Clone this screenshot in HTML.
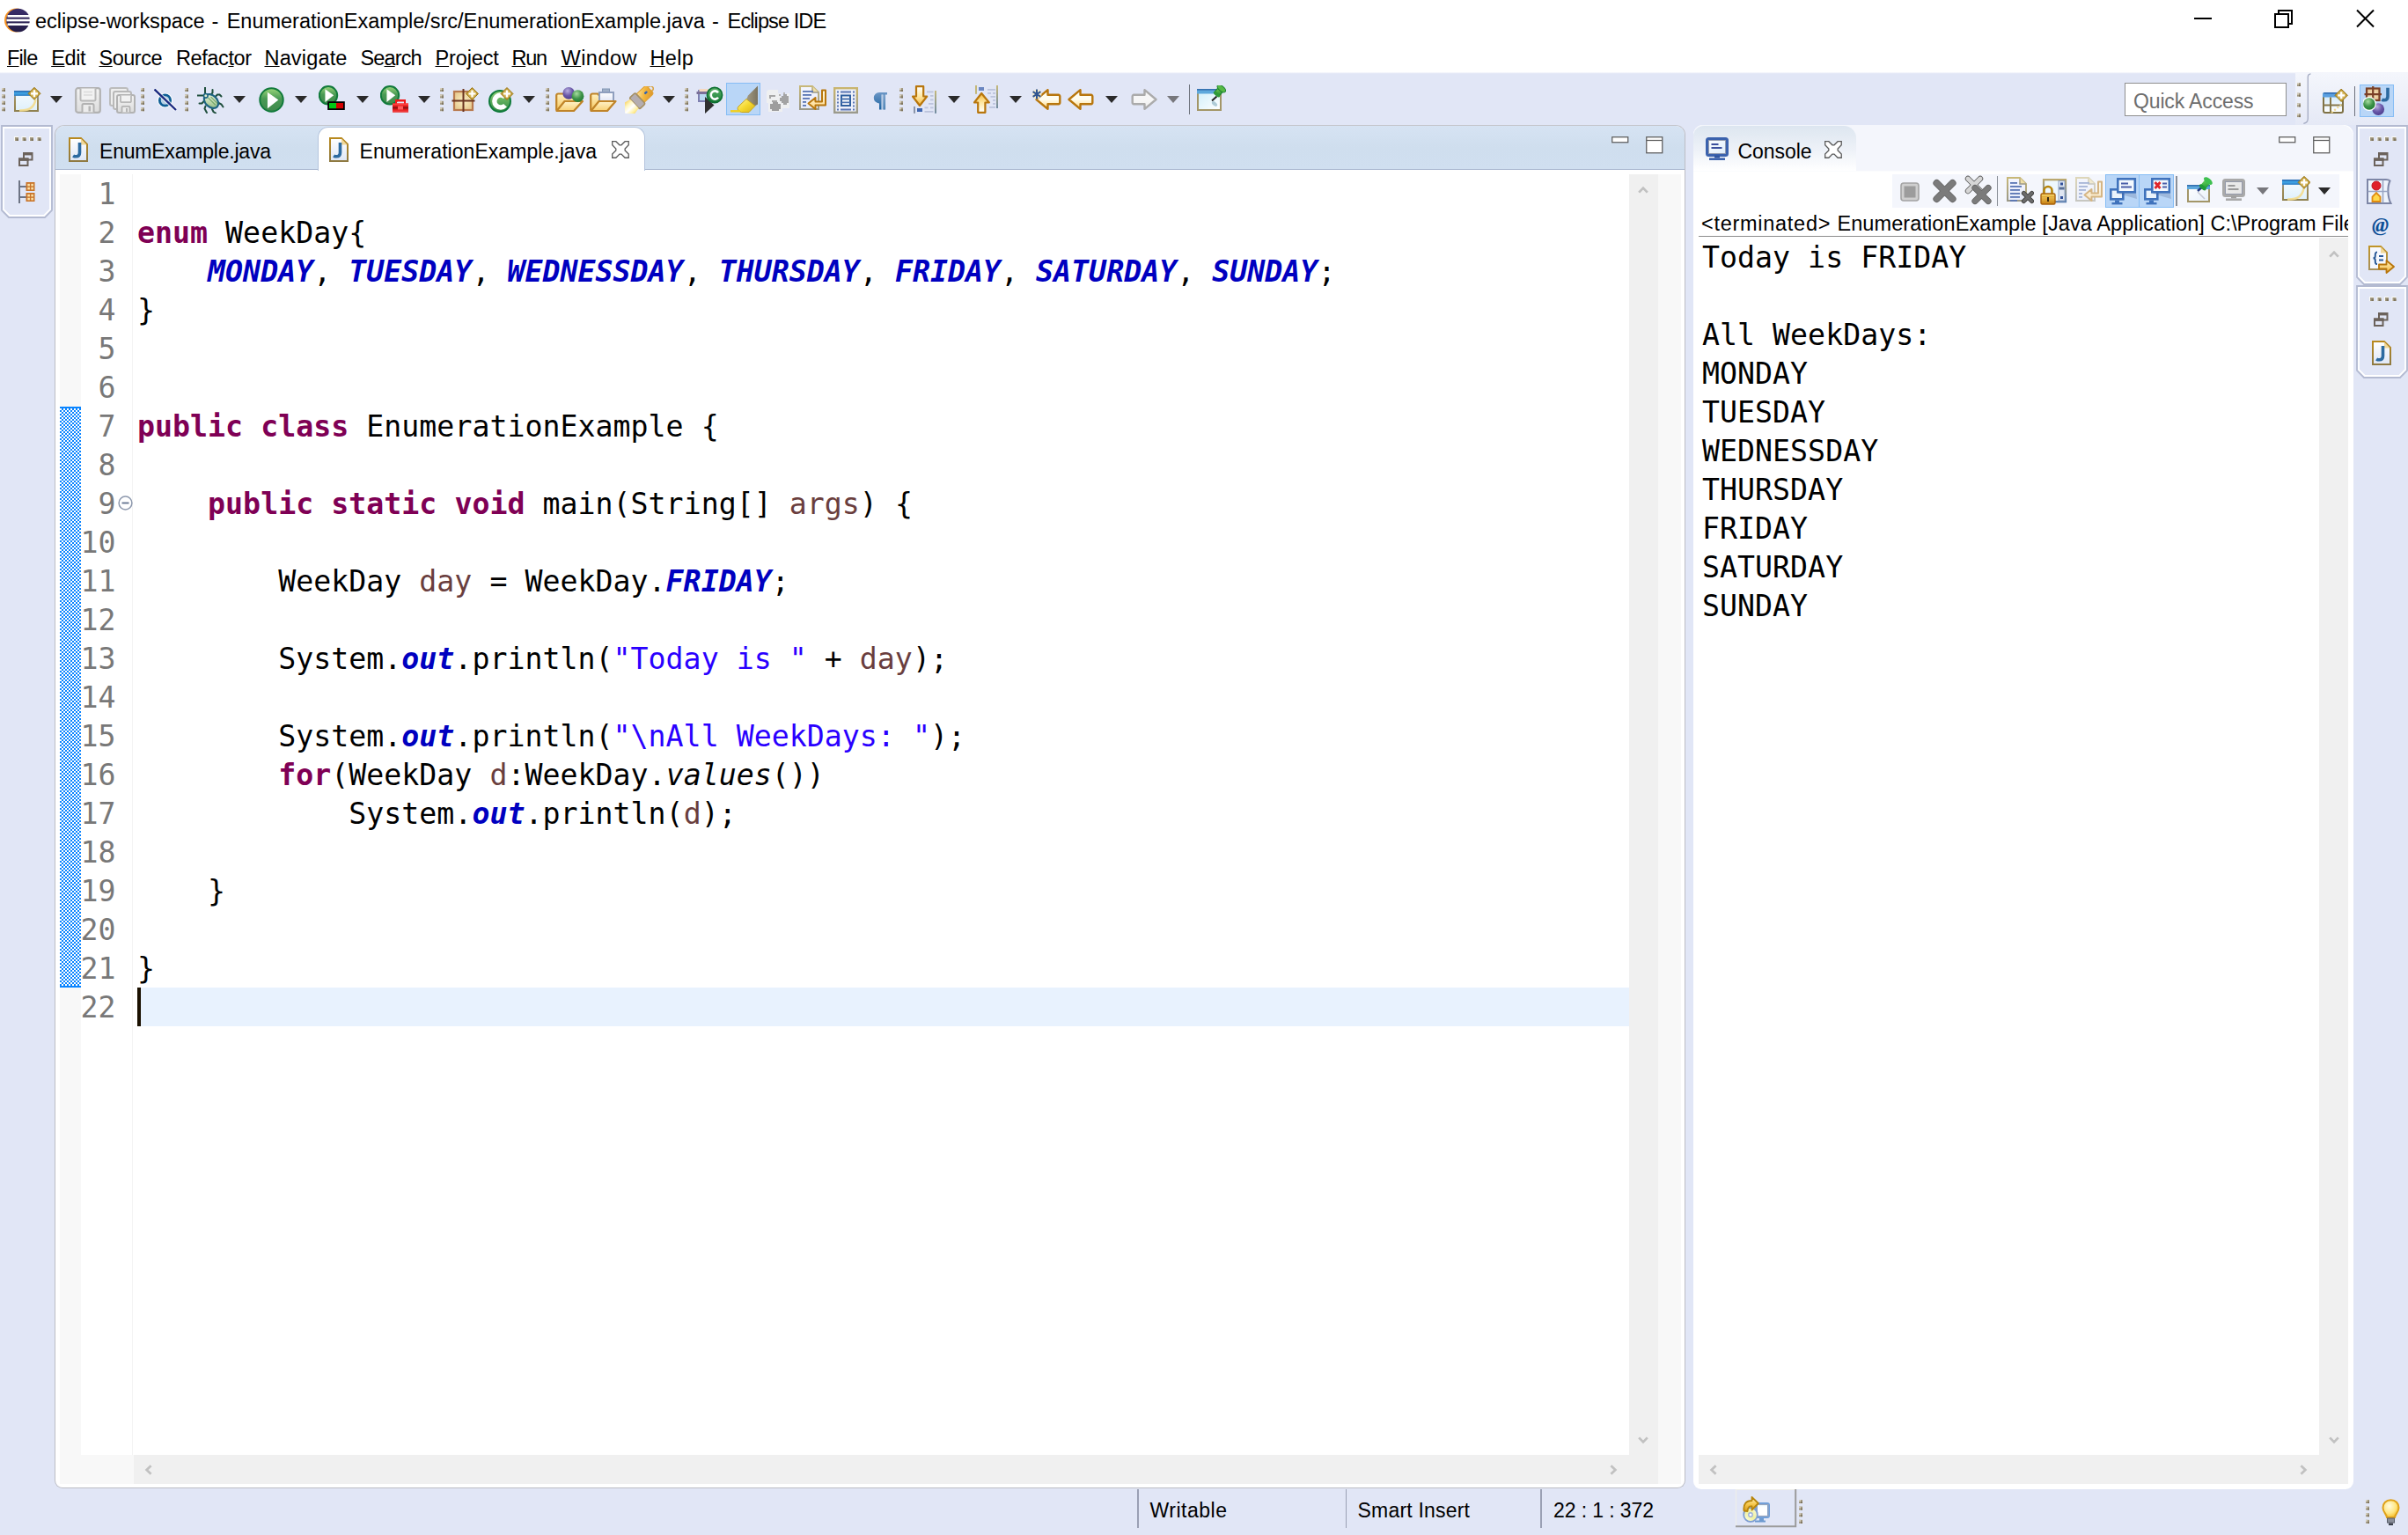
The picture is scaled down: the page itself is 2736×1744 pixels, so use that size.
<!DOCTYPE html>
<html><head><meta charset="utf-8"><title>Eclipse IDE</title>
<style>html,body{margin:0;padding:0}body{width:2736px;height:1744px;overflow:hidden;position:relative;background:#e1e6f6;font-family:'Liberation Sans', sans-serif}u{text-decoration-thickness:inherit}</style></head>
<body>
<div style="position:absolute;left:0px;top:0px;width:2736px;height:83px;background:#fff"></div>
<div style="position:absolute;left:0px;top:82px;width:2736px;height:2px;background:linear-gradient(#fff,#e9ecf8 50%,#e1e6f6)"></div>
<svg style="position:absolute;left:5px;top:9px;" width="30" height="28" viewBox="0 0 30 28"><defs><linearGradient id="g1" x1="0" y1="0" x2="0" y2="1"><stop offset="0" stop-color="#3a2f6b"/><stop offset="1" stop-color="#221a45"/></linearGradient></defs><circle cx="13.5" cy="14" r="13.5" fill="#f79422"/><circle cx="15.5" cy="14" r="13.3" fill="url(#g1)"/><rect x="3.5" y="8" width="25.5" height="2.6" fill="#fff"/><rect x="2.5" y="12.7" width="26.8" height="2.6" fill="#fff"/><rect x="3.5" y="17.4" width="25.5" height="2.6" fill="#fff"/></svg>
<div style="position:absolute;left:40px;top:12.50px;white-space:pre;font:23.5px/1 'Liberation Sans', sans-serif;color:#000"><span style="letter-spacing:-0.042px">eclipse-workspace</span><span style="letter-spacing:1.403px"> - </span><span style="letter-spacing:-0.008px">EnumerationExample/src/EnumerationExample.java</span><span style="letter-spacing:1.670px"> - </span><span style="letter-spacing:-0.897px">Eclipse IDE</span></div>
<div style="position:absolute;left:8px;top:54.70px;white-space:pre;font:normal normal 23.5px/1 'Liberation Sans', sans-serif;letter-spacing:-0.892px;color:#000;text-decoration-thickness:1.3px;text-underline-offset:1.4px;"><u>F</u>ile</div>
<div style="position:absolute;left:58.2px;top:54.70px;white-space:pre;font:normal normal 23.5px/1 'Liberation Sans', sans-serif;letter-spacing:-0.367px;color:#000;text-decoration-thickness:1.3px;text-underline-offset:1.4px;"><u>E</u>dit</div>
<div style="position:absolute;left:112.5px;top:54.70px;white-space:pre;font:normal normal 23.5px/1 'Liberation Sans', sans-serif;letter-spacing:-0.494px;color:#000;text-decoration-thickness:1.3px;text-underline-offset:1.4px;"><u>S</u>ource</div>
<div style="position:absolute;left:200px;top:54.70px;white-space:pre;font:normal normal 23.5px/1 'Liberation Sans', sans-serif;letter-spacing:-0.404px;color:#000;text-decoration-thickness:1.3px;text-underline-offset:1.4px;">Refac<u>t</u>or</div>
<div style="position:absolute;left:300.5px;top:54.70px;white-space:pre;font:normal normal 23.5px/1 'Liberation Sans', sans-serif;letter-spacing:0.164px;color:#000;text-decoration-thickness:1.3px;text-underline-offset:1.4px;"><u>N</u>avigate</div>
<div style="position:absolute;left:409.5px;top:54.70px;white-space:pre;font:normal normal 23.5px/1 'Liberation Sans', sans-serif;letter-spacing:-0.874px;color:#000;text-decoration-thickness:1.3px;text-underline-offset:1.4px;">Se<u>a</u>rch</div>
<div style="position:absolute;left:494.5px;top:54.70px;white-space:pre;font:normal normal 23.5px/1 'Liberation Sans', sans-serif;letter-spacing:-0.140px;color:#000;text-decoration-thickness:1.3px;text-underline-offset:1.4px;"><u>P</u>roject</div>
<div style="position:absolute;left:581.5px;top:54.70px;white-space:pre;font:normal normal 23.5px/1 'Liberation Sans', sans-serif;letter-spacing:-1.312px;color:#000;text-decoration-thickness:1.3px;text-underline-offset:1.4px;"><u>R</u>un</div>
<div style="position:absolute;left:637.5px;top:54.70px;white-space:pre;font:normal normal 23.5px/1 'Liberation Sans', sans-serif;letter-spacing:0.481px;color:#000;text-decoration-thickness:1.3px;text-underline-offset:1.4px;"><u>W</u>indow</div>
<div style="position:absolute;left:738.5px;top:54.70px;white-space:pre;font:normal normal 23.5px/1 'Liberation Sans', sans-serif;letter-spacing:0.319px;color:#000;text-decoration-thickness:1.3px;text-underline-offset:1.4px;"><u>H</u>elp</div>
<svg style="position:absolute;left:2480px;top:0px;" width="256" height="44" viewBox="0 0 256 44"><g fill="none" stroke="#000" stroke-width="2"><path d="M13 21h20"/><path d="M105 16h15v15h-15z"/><path d="M109 16v-4h15v15h-4"/><path d="M198 11.5l19 19M217 11.5l-19 19"/></g></svg>
<svg style="position:absolute;left:2px;top:100px;" width="4" height="27" viewBox="0 0 4 27"><rect x="0" y="0.0" width="4" height="4" fill="#a39a84"/><rect x="0" y="0.0" width="2" height="2" fill="#d6cfbc"/><rect x="2" y="2.0" width="2" height="2" fill="#7f755d"/><rect x="0" y="7.4" width="4" height="4" fill="#a39a84"/><rect x="0" y="7.4" width="2" height="2" fill="#d6cfbc"/><rect x="2" y="9.4" width="2" height="2" fill="#7f755d"/><rect x="0" y="14.8" width="4" height="4" fill="#a39a84"/><rect x="0" y="14.8" width="2" height="2" fill="#d6cfbc"/><rect x="2" y="16.8" width="2" height="2" fill="#7f755d"/><rect x="0" y="22.2" width="4" height="4" fill="#a39a84"/><rect x="0" y="22.2" width="2" height="2" fill="#d6cfbc"/><rect x="2" y="24.2" width="2" height="2" fill="#7f755d"/></svg>
<svg style="position:absolute;left:16px;top:98px;" width="32" height="32" viewBox="0 0 32 32"><defs><linearGradient id="g2" x1="0" y1="0" x2="0" y2="1"><stop offset="0" stop-color="#8aa0c8"/><stop offset="0.5" stop-color="#9e8c55"/><stop offset="1" stop-color="#8f8150"/></linearGradient><linearGradient id="g3" x1="0" y1="0" x2="0" y2="1"><stop offset="0" stop-color="#f5fbfe"/><stop offset="1" stop-color="#dff0fb"/></linearGradient></defs><rect x="1" y="6" width="26" height="22" fill="url(#g3)" stroke="url(#g2)" stroke-width="2"/><rect x="0" y="5" width="28" height="5.5" fill="#3c9fe0"/><rect x="0" y="5" width="28" height="1.6" fill="#2b6fb5"/><rect x="0" y="9.5" width="28" height="1.3" fill="#2f7fc4"/><path d="M6 27.5C16 28 23 24 24.5 15" fill="none" stroke="#f3dc8c" stroke-width="2.4" opacity="0.9"/><defs><radialGradient id="g4" cx="0.5" cy="0.5" r="0.6"><stop offset="0" stop-color="#f3e2a4"/><stop offset="0.55" stop-color="#c9a440"/><stop offset="1" stop-color="#a07a14"/></radialGradient></defs><path d="M23 1.3000000000000007L30 8.3L23 15.3L16 8.3z" fill="url(#g4)" stroke="#9c7a1c" stroke-width="1"/><path d="M23 4.300000000000001v8M19 8.3h8" stroke="#fff" stroke-width="2.200"/></svg>
<svg style="position:absolute;left:57px;top:109px;" width="14" height="8" viewBox="0 0 14 8"><path d="M0 0h14l-7 8z" fill="#2a2a2a"/></svg>
<svg style="position:absolute;left:85px;top:99px;" width="30" height="30" viewBox="0 0 30 30"><defs><linearGradient id="g5" x1="0" y1="0" x2="0" y2="1"><stop offset="0" stop-color="#f4f4f4"/><stop offset="1" stop-color="#dcdcdc"/></linearGradient></defs><rect x="1.2" y="1.2" width="27.6" height="27.6" rx="2.5" fill="url(#g5)" stroke="#b2b2b2" stroke-width="2.2"/><path d="M6.5 1.5v12.5a1.5 1.5 0 0 0 1.5 1.5h14a1.5 1.5 0 0 0 1.5-1.5V1.5" fill="#f2f2f2" stroke="#b8b8b8" stroke-width="2"/><path d="M10 5.5h10M10 9h10" stroke="#dadada" stroke-width="1.6"/><path d="M8.5 28.5v-8a1.5 1.5 0 0 1 1.5-1.5h10a1.5 1.5 0 0 1 1.5 1.5v8" fill="#ececec" stroke="#b2b2b2" stroke-width="2"/><rect x="15.5" y="21.5" width="2.6" height="6" fill="#b5b5b5"/></svg>
<svg style="position:absolute;left:124px;top:99px;" width="30" height="30" viewBox="0 0 30 30"><defs><linearGradient id="g6" x1="0" y1="0" x2="0" y2="1"><stop offset="0" stop-color="#f4f4f4"/><stop offset="1" stop-color="#dcdcdc"/></linearGradient></defs><rect x="1" y="1" width="20" height="20" rx="2.2" fill="#eee" stroke="#bcbcbc" stroke-width="2"/><rect x="5" y="5" width="20" height="20" rx="2.2" fill="#eee" stroke="#b8b8b8" stroke-width="2"/><rect x="9" y="9" width="20" height="20" rx="2.2" fill="url(#g6)" stroke="#b2b2b2" stroke-width="2"/><path d="M13 9.5v6.5a1.2 1.2 0 0 0 1.2 1.2h9.6a1.2 1.2 0 0 0 1.2-1.2V9.5" fill="#f2f2f2" stroke="#b8b8b8" stroke-width="1.8"/><path d="M14.5 28.5v-5.5a1.2 1.2 0 0 1 1.2-1.2h6.6a1.2 1.2 0 0 1 1.2 1.2v5.5" fill="#ececec" stroke="#b2b2b2" stroke-width="1.8"/><rect x="19" y="24" width="2" height="4.2" fill="#b5b5b5"/></svg>
<svg style="position:absolute;left:160px;top:100px;" width="4" height="27" viewBox="0 0 4 27"><rect x="0" y="0.0" width="4" height="4" fill="#a39a84"/><rect x="0" y="0.0" width="2" height="2" fill="#d6cfbc"/><rect x="2" y="2.0" width="2" height="2" fill="#7f755d"/><rect x="0" y="7.4" width="4" height="4" fill="#a39a84"/><rect x="0" y="7.4" width="2" height="2" fill="#d6cfbc"/><rect x="2" y="9.4" width="2" height="2" fill="#7f755d"/><rect x="0" y="14.8" width="4" height="4" fill="#a39a84"/><rect x="0" y="14.8" width="2" height="2" fill="#d6cfbc"/><rect x="2" y="16.8" width="2" height="2" fill="#7f755d"/><rect x="0" y="22.2" width="4" height="4" fill="#a39a84"/><rect x="0" y="22.2" width="2" height="2" fill="#d6cfbc"/><rect x="2" y="24.2" width="2" height="2" fill="#7f755d"/></svg>
<svg style="position:absolute;left:175px;top:100.5px;" width="26" height="25" viewBox="0 0 26 25"><circle cx="12.5" cy="13" r="8.6" fill="#fff"/><circle cx="12.5" cy="13" r="6.2" fill="#b5d0e4" stroke="#0e5e96" stroke-width="2.8"/><path d="M0.5 0.5L25 24" stroke="#fff" stroke-width="4.5" opacity="0.7"/><path d="M0.5 0.5L25 24" stroke="#1b2a80" stroke-width="2.4"/></svg>
<svg style="position:absolute;left:210px;top:100px;" width="4" height="27" viewBox="0 0 4 27"><rect x="0" y="0.0" width="4" height="4" fill="#a39a84"/><rect x="0" y="0.0" width="2" height="2" fill="#d6cfbc"/><rect x="2" y="2.0" width="2" height="2" fill="#7f755d"/><rect x="0" y="7.4" width="4" height="4" fill="#a39a84"/><rect x="0" y="7.4" width="2" height="2" fill="#d6cfbc"/><rect x="2" y="9.4" width="2" height="2" fill="#7f755d"/><rect x="0" y="14.8" width="4" height="4" fill="#a39a84"/><rect x="0" y="14.8" width="2" height="2" fill="#d6cfbc"/><rect x="2" y="16.8" width="2" height="2" fill="#7f755d"/><rect x="0" y="22.2" width="4" height="4" fill="#a39a84"/><rect x="0" y="22.2" width="2" height="2" fill="#d6cfbc"/><rect x="2" y="24.2" width="2" height="2" fill="#7f755d"/></svg>
<svg style="position:absolute;left:223.5px;top:99px;" width="31" height="30" viewBox="0 0 31 30"><defs><linearGradient id="g7" x1="0" y1="0" x2="1" y2="1"><stop offset="0" stop-color="#f2f8ea"/><stop offset="0.5" stop-color="#c4dcb4"/><stop offset="1" stop-color="#7fae6e"/></linearGradient></defs><g fill="none" stroke="#1f4f3d" stroke-width="2" stroke-linecap="round"><path d="M9 0.5v6.5"/><path d="M17.5 3v3.5l-3 3.5"/><path d="M0.5 9.5h7"/><path d="M20 11.5l3-3h2.5l2 2"/><path d="M2.5 18.5h3l3-3.5"/><path d="M24.5 18l3 1.5 2 3"/><path d="M9.5 21.5l-1 3 2.5 4.5"/><path d="M17 25l1.5 3 2.5 1.5"/></g><ellipse cx="16" cy="16" rx="9.2" ry="6.6" transform="rotate(42 16 16)" fill="url(#g7)" stroke="#1e6482" stroke-width="2.2"/><path d="M12.500 12l8.500 8.500M15.500 11l7.500 7.500" stroke="#5f9858" stroke-width="1.400" opacity="0.700"/><circle cx="9.8" cy="9.8" r="2.3" fill="#dfeccf" stroke="#1e6482" stroke-width="1.6"/></svg>
<svg style="position:absolute;left:265px;top:109px;" width="14" height="8" viewBox="0 0 14 8"><path d="M0 0h14l-7 8z" fill="#2a2a2a"/></svg>
<svg style="position:absolute;left:294px;top:98.5px;" width="29" height="29" viewBox="0 0 29 29"><defs><linearGradient id="g8" x1="0" y1="0" x2="0" y2="1"><stop offset="0" stop-color="#9ad67a"/><stop offset="0.45" stop-color="#4a9a55"/><stop offset="1" stop-color="#3f8a4c"/></linearGradient></defs><circle cx="14.5" cy="14.5" r="13.2" fill="url(#g8)" stroke="#117a3b" stroke-width="2"/><path d="M9.956 5.696L22.310000000000002 14.5L9.956 24.156z" fill="#fff"/></svg>
<svg style="position:absolute;left:335px;top:109px;" width="14" height="8" viewBox="0 0 14 8"><path d="M0 0h14l-7 8z" fill="#2a2a2a"/></svg>
<svg style="position:absolute;left:362px;top:96.7px;" width="31" height="29" viewBox="0 0 31 29"><defs><linearGradient id="g9" x1="0" y1="0" x2="0" y2="1"><stop offset="0" stop-color="#9ad67a"/><stop offset="0.45" stop-color="#4a9a55"/><stop offset="1" stop-color="#3f8a4c"/></linearGradient></defs><circle cx="11" cy="11.3" r="10.2" fill="url(#g9)" stroke="#117a3b" stroke-width="2"/><path d="M7.416 4.356000000000001L17.16 11.3L7.416 18.916z" fill="#fff"/><rect x="10.2" y="18.2" width="19.6" height="9.8" fill="#000"/><rect x="12" y="20" width="8" height="6.2" fill="#00c814"/><rect x="20" y="20" width="8" height="6.2" fill="#d40000"/></svg>
<svg style="position:absolute;left:405px;top:109px;" width="14" height="8" viewBox="0 0 14 8"><path d="M0 0h14l-7 8z" fill="#2a2a2a"/></svg>
<svg style="position:absolute;left:432px;top:96.7px;" width="33" height="31" viewBox="0 0 33 31"><defs><linearGradient id="g10" x1="0" y1="0" x2="0" y2="1"><stop offset="0" stop-color="#9ad67a"/><stop offset="0.45" stop-color="#4a9a55"/><stop offset="1" stop-color="#3f8a4c"/></linearGradient></defs><circle cx="11" cy="11.3" r="10.2" fill="url(#g10)" stroke="#117a3b" stroke-width="2"/><path d="M7.416 4.356000000000001L17.16 11.3L7.416 18.916z" fill="#fff"/><path d="M18 17.5h10v4" fill="none" stroke="#f01818" stroke-width="2"/><rect x="18" y="17" width="10" height="5" fill="none" stroke="#f01818" stroke-width="2"/><rect x="14" y="20.5" width="18" height="10" fill="#e31a1a"/><rect x="14" y="20.5" width="18" height="2" fill="#ff4040"/><rect x="14" y="24.5" width="18" height="2" fill="#8e0f0f"/><rect x="20" y="23.5" width="6" height="4" fill="#ff5a5a"/><rect x="14" y="28.5" width="18" height="2" fill="#f03a3a"/></svg>
<svg style="position:absolute;left:475px;top:109px;" width="14" height="8" viewBox="0 0 14 8"><path d="M0 0h14l-7 8z" fill="#2a2a2a"/></svg>
<svg style="position:absolute;left:500px;top:100px;" width="4" height="27" viewBox="0 0 4 27"><rect x="0" y="0.0" width="4" height="4" fill="#a39a84"/><rect x="0" y="0.0" width="2" height="2" fill="#d6cfbc"/><rect x="2" y="2.0" width="2" height="2" fill="#7f755d"/><rect x="0" y="7.4" width="4" height="4" fill="#a39a84"/><rect x="0" y="7.4" width="2" height="2" fill="#d6cfbc"/><rect x="2" y="9.4" width="2" height="2" fill="#7f755d"/><rect x="0" y="14.8" width="4" height="4" fill="#a39a84"/><rect x="0" y="14.8" width="2" height="2" fill="#d6cfbc"/><rect x="2" y="16.8" width="2" height="2" fill="#7f755d"/><rect x="0" y="22.2" width="4" height="4" fill="#a39a84"/><rect x="0" y="22.2" width="2" height="2" fill="#d6cfbc"/><rect x="2" y="24.2" width="2" height="2" fill="#7f755d"/></svg>
<svg style="position:absolute;left:512.5px;top:98px;" width="32" height="32" viewBox="0 0 32 32"><defs><radialGradient id="g11" cx="0.5" cy="0.5" r="0.7"><stop offset="0" stop-color="#fbf0c4"/><stop offset="1" stop-color="#e2c184"/></radialGradient></defs><rect x="3" y="6" width="21" height="21" fill="url(#g11)" stroke="#b87a4e" stroke-width="2.2"/><path d="M13.5 3v26M0.5 16.5h26" stroke="#6a3420" stroke-width="2"/><defs><radialGradient id="g12" cx="0.5" cy="0.5" r="0.6"><stop offset="0" stop-color="#f3e2a4"/><stop offset="0.55" stop-color="#c9a440"/><stop offset="1" stop-color="#a07a14"/></radialGradient></defs><path d="M23.5 1.5L30.5 8.5L23.5 15.5L16.5 8.5z" fill="url(#g12)" stroke="#9c7a1c" stroke-width="1"/><path d="M23.5 4.5v8M19.5 8.5h8" stroke="#fff" stroke-width="2.200"/></svg>
<svg style="position:absolute;left:555px;top:97.5px;" width="30" height="30" viewBox="0 0 30 30"><defs><linearGradient id="g13" x1="0" y1="0" x2="0" y2="1"><stop offset="0" stop-color="#8fcf74"/><stop offset="1" stop-color="#2f8a44"/></linearGradient></defs><circle cx="13" cy="17" r="12" fill="url(#g13)" stroke="#0f7a3a" stroke-width="2"/><path d="M19 12.300a7 7 0 1 0 0 9.400" fill="none" stroke="#fff" stroke-width="5.400"/><defs><radialGradient id="g14" cx="0.5" cy="0.5" r="0.6"><stop offset="0" stop-color="#f3e2a4"/><stop offset="0.55" stop-color="#c9a440"/><stop offset="1" stop-color="#a07a14"/></radialGradient></defs><path d="M21 1.5L28 8.5L21 15.5L14 8.5z" fill="url(#g14)" stroke="#9c7a1c" stroke-width="1"/><path d="M21 4.5v8M17 8.5h8" stroke="#fff" stroke-width="2.200"/></svg>
<svg style="position:absolute;left:594px;top:109px;" width="14" height="8" viewBox="0 0 14 8"><path d="M0 0h14l-7 8z" fill="#2a2a2a"/></svg>
<svg style="position:absolute;left:620px;top:100px;" width="4" height="27" viewBox="0 0 4 27"><rect x="0" y="0.0" width="4" height="4" fill="#a39a84"/><rect x="0" y="0.0" width="2" height="2" fill="#d6cfbc"/><rect x="2" y="2.0" width="2" height="2" fill="#7f755d"/><rect x="0" y="7.4" width="4" height="4" fill="#a39a84"/><rect x="0" y="7.4" width="2" height="2" fill="#d6cfbc"/><rect x="2" y="9.4" width="2" height="2" fill="#7f755d"/><rect x="0" y="14.8" width="4" height="4" fill="#a39a84"/><rect x="0" y="14.8" width="2" height="2" fill="#d6cfbc"/><rect x="2" y="16.8" width="2" height="2" fill="#7f755d"/><rect x="0" y="22.2" width="4" height="4" fill="#a39a84"/><rect x="0" y="22.2" width="2" height="2" fill="#d6cfbc"/><rect x="2" y="24.2" width="2" height="2" fill="#7f755d"/></svg>
<svg style="position:absolute;left:630.5px;top:98px;" width="33" height="30" viewBox="0 0 33 30"><defs><linearGradient id="g15" x1="0" y1="0" x2="0" y2="1"><stop offset="0" stop-color="#fff0c0"/><stop offset="1" stop-color="#f6c860"/></linearGradient><linearGradient id="g16" x1="0" y1="0" x2="0" y2="1"><stop offset="0" stop-color="#fff3cc"/><stop offset="1" stop-color="#f9d173"/></linearGradient></defs><g transform="translate(0 7)"><path d="M1.2 20.5V3.5a2 2 0 0 1 2-2h6l2 2.5h13v6" fill="url(#g15)" stroke="#c08428" stroke-width="2.2" stroke-linejoin="round"/><path d="M1.5 21L10.5 10h20.5L21 21z" fill="url(#g16)" stroke="#c08428" stroke-width="2.2" stroke-linejoin="round"/></g><defs><radialGradient id="g17" cx="0.4" cy="0.3" r="0.75"><stop offset="0" stop-color="#b9aee0"/><stop offset="0.55" stop-color="#6a58a8"/><stop offset="1" stop-color="#4a3a8c"/></radialGradient></defs><circle cx="15.2" cy="7.9" r="6.8" fill="url(#g17)"/><defs><radialGradient id="g18" cx="0.4" cy="0.3" r="0.75"><stop offset="0" stop-color="#a8dca0"/><stop offset="0.55" stop-color="#3f944a"/><stop offset="1" stop-color="#1f7a33"/></radialGradient></defs><circle cx="25.5" cy="11.2" r="6.9" fill="url(#g18)"/></svg>
<svg style="position:absolute;left:669.5px;top:98px;" width="33" height="30" viewBox="0 0 33 30"><defs><linearGradient id="g19" x1="0" y1="0" x2="0" y2="1"><stop offset="0" stop-color="#fff0c0"/><stop offset="1" stop-color="#f6c860"/></linearGradient></defs><path d="M1.200 27.500V10.500a2 2 0 0 1 2-2h6l2 2.500h13v6" fill="url(#g19)" stroke="#c08428" stroke-width="2.200" stroke-linejoin="round"/><defs><linearGradient id="g20" x1="0" y1="0" x2="0" y2="1"><stop offset="0" stop-color="#ffffff"/><stop offset="1" stop-color="#dfe4f4"/></linearGradient></defs><rect x="14.500" y="3" width="8" height="4.500" fill="#9fb0c8" stroke="#8296b4" stroke-width="1"/><rect x="11" y="7" width="16" height="11" fill="url(#g20)" stroke="#8f9fbe" stroke-width="2"/><defs><linearGradient id="g21" x1="0" y1="0" x2="0" y2="1"><stop offset="0" stop-color="#fff3cc"/><stop offset="1" stop-color="#f9d173"/></linearGradient></defs><path d="M1.500 28L10.500 17h19L20 28z" fill="url(#g21)" stroke="#c08428" stroke-width="2.200" stroke-linejoin="round"/></svg>
<svg style="position:absolute;left:710px;top:98px;overflow:hidden" width="33" height="31" viewBox="0 0 33 31"><defs><linearGradient id="g22" x1="0" y1="0" x2="1" y2="1"><stop offset="0" stop-color="#ffe9a8"/><stop offset="0.5" stop-color="#f2b53c"/><stop offset="1" stop-color="#d9932a"/></linearGradient><linearGradient id="g23" x1="0" y1="0" x2="0" y2="1"><stop offset="0" stop-color="#f9c94a"/><stop offset="0.3" stop-color="#fff6c0"/><stop offset="0.55" stop-color="#ffffff"/><stop offset="0.8" stop-color="#fff0a0"/><stop offset="1" stop-color="#f7cf5a"/></linearGradient></defs><g transform="rotate(-43 16 15)"><circle cx="34" cy="15" r="3" fill="none" stroke="#d9a54a" stroke-width="1.6"/><rect x="16" y="8.5" width="17" height="13" rx="2.5" fill="url(#g22)" stroke="#e0a030" stroke-width="1"/><rect x="25" y="13.5" width="4" height="2.4" rx="1" fill="#2c63b8"/><rect x="9" y="6.5" width="9" height="17" rx="2" fill="#b4adb0" stroke="#a48e62" stroke-width="1.6"/><path d="M9 8L-6 5v20L9 22z" fill="url(#g23)"/></g></svg>
<svg style="position:absolute;left:753px;top:109px;" width="14" height="8" viewBox="0 0 14 8"><path d="M0 0h14l-7 8z" fill="#2a2a2a"/></svg>
<svg style="position:absolute;left:778px;top:100px;" width="4" height="27" viewBox="0 0 4 27"><rect x="0" y="0.0" width="4" height="4" fill="#a39a84"/><rect x="0" y="0.0" width="2" height="2" fill="#d6cfbc"/><rect x="2" y="2.0" width="2" height="2" fill="#7f755d"/><rect x="0" y="7.4" width="4" height="4" fill="#a39a84"/><rect x="0" y="7.4" width="2" height="2" fill="#d6cfbc"/><rect x="2" y="9.4" width="2" height="2" fill="#7f755d"/><rect x="0" y="14.8" width="4" height="4" fill="#a39a84"/><rect x="0" y="14.8" width="2" height="2" fill="#d6cfbc"/><rect x="2" y="16.8" width="2" height="2" fill="#7f755d"/><rect x="0" y="22.2" width="4" height="4" fill="#a39a84"/><rect x="0" y="22.2" width="2" height="2" fill="#d6cfbc"/><rect x="2" y="24.2" width="2" height="2" fill="#7f755d"/></svg>
<svg style="position:absolute;left:791px;top:97px;" width="31" height="33" viewBox="0 0 31 33"><rect x="3" y="6" width="12" height="12" fill="#b9d9f2" stroke="#7e7fb0" stroke-width="2"/><rect x="0.5" y="7" width="14" height="3" fill="#7a6f98"/><rect x="3.5" y="4" width="10" height="3" fill="#f6d9c0"/><path d="M10 13v19l10.5-9.5z" fill="#2f2f2f"/><defs><linearGradient id="g24" x1="0" y1="0" x2="0" y2="1"><stop offset="0" stop-color="#5fb46a"/><stop offset="1" stop-color="#157a35"/></linearGradient></defs><circle cx="21" cy="11" r="8.6" fill="url(#g24)" stroke="#0c6f30" stroke-width="1.6"/><path d="M25 8.2a4.6 4.6 0 1 0 0 5.6" fill="none" stroke="#fff" stroke-width="2.6"/></svg>
<div style="position:absolute;left:825px;top:94px;width:39px;height:37px;background:#b9d6f7;border:1px solid #86bdf5;box-sizing:border-box"></div>
<svg style="position:absolute;left:829.5px;top:96.5px;" width="32" height="32" viewBox="0 0 32 32"><defs><linearGradient id="g25" x1="0" y1="0" x2="1" y2="0"><stop offset="0" stop-color="#a39c84"/><stop offset="1" stop-color="#7b745f"/></linearGradient><linearGradient id="g26" x1="0" y1="0" x2="1" y2="1"><stop offset="0" stop-color="#fff7a8"/><stop offset="0.5" stop-color="#f5d930"/><stop offset="1" stop-color="#d8b318"/></linearGradient></defs><path d="M31 0.5L20 11.5l-2 4.5 9.5 7.5 3.5-2z" fill="url(#g25)"/><path d="M18 15.5L9 24c-1.5 1.8-1 4 0.5 5.2l3 1.3h8.5l7-7.2z" fill="url(#g26)" stroke="#c9a51a" stroke-width="1"/><path d="M0 29.3h11" stroke="#f1cf1c" stroke-width="2.4"/></svg>
<svg style="position:absolute;left:871px;top:100.5px;" width="27" height="27" viewBox="0 0 27 27"><path d="M2 1h11v4h3v4h7v-4h3v17h-8v4h-16v-10h-3v-12z" fill="#f1f1f1" opacity="0.9"/><path d="M3 7h7v2h-5v2h-2z" fill="#a7a7a7"/><path d="M6 13h6v2h-6z" fill="#a7a7a7"/><path d="M4 17h3v-2h6v2h3v6h-2v2h-8v-2h-2z" fill="#9d9d9d"/><path d="M17 8h2v-2h4v2h2v8h-2v2h-4v-2h-2v-2h-2v-4h2z" fill="#a3a3a3"/><rect x="19" y="4" width="2" height="2" fill="#b5b5b5"/><rect x="14" y="6" width="2" height="2" fill="#b5b5b5"/></svg>
<svg style="position:absolute;left:907.5px;top:96.5px;opacity:1" width="32" height="30" viewBox="0 0 32 30"><defs><linearGradient id="g27" x1="0" y1="0" x2="0" y2="1"><stop offset="0" stop-color="#c8b878"/><stop offset="1" stop-color="#9a9888"/></linearGradient><linearGradient id="g28" x1="0" y1="0" x2="0" y2="1"><stop offset="0" stop-color="#f4f6ff"/><stop offset="1" stop-color="#e6ebf8"/></linearGradient></defs><path d="M1 1h14l7 7v19h-21z" fill="url(#g28)" stroke="url(#g27)" stroke-width="2" stroke-linejoin="miter"/><path d="M15 1v7h7" fill="#f0dfa8" stroke="url(#g27)" stroke-width="1.6"/><rect x="4" y="6" width="12" height="1.8" fill="#5a76b4"/><rect x="4" y="10" width="10" height="1.8" fill="#5a76b4"/><rect x="4" y="14" width="8" height="1.8" fill="#5a76b4"/><rect x="4" y="18" width="4" height="1.8" fill="#5a76b4"/><rect x="4" y="22" width="4" height="1.8" fill="#5a76b4"/><defs><linearGradient id="g29" x1="0" y1="0" x2="0" y2="1"><stop offset="0" stop-color="#fffbe6"/><stop offset="1" stop-color="#ffd98a"/></linearGradient></defs><path d="M26 5.5v13h-7.5v-4.5l-8 6.5 8 6.5v-4.5h11.5v-17z" fill="url(#g29)" stroke="#b8760c" stroke-width="2" stroke-linejoin="round"/></svg>
<svg style="position:absolute;left:947px;top:99px;" width="28" height="30" viewBox="0 0 28 30"><defs><linearGradient id="g30" x1="0" y1="0" x2="0" y2="1"><stop offset="0" stop-color="#c9b56e"/><stop offset="1" stop-color="#9a9a8c"/></linearGradient></defs><rect x="1.2" y="1.2" width="25.6" height="27.6" fill="#eef1fa" stroke="url(#g30)" stroke-width="2.4"/><rect x="4" y="4.5" width="2" height="2" fill="#5a76b4"/><rect x="22" y="4.5" width="2" height="2" fill="#5a76b4"/><rect x="4" y="8.5" width="2" height="2" fill="#5a76b4"/><rect x="22" y="8.5" width="2" height="2" fill="#5a76b4"/><rect x="4" y="12.5" width="2" height="2" fill="#5a76b4"/><rect x="22" y="12.5" width="2" height="2" fill="#5a76b4"/><rect x="4" y="16.5" width="2" height="2" fill="#5a76b4"/><rect x="22" y="16.5" width="2" height="2" fill="#5a76b4"/><rect x="4" y="20.5" width="2" height="2" fill="#5a76b4"/><rect x="22" y="20.5" width="2" height="2" fill="#5a76b4"/><rect x="4" y="24.5" width="2" height="2" fill="#5a76b4"/><rect x="22" y="24.5" width="2" height="2" fill="#5a76b4"/><rect x="8" y="4.5" width="12" height="2" fill="#5a76b4"/><rect x="8" y="24.5" width="12" height="2" fill="#5a76b4"/><rect x="9" y="9.5" width="10" height="11.5" fill="#fff" stroke="#2f5f9e" stroke-width="2"/><path d="M9 13.5h10M9 17.3h10" stroke="#4a72b0" stroke-width="1.8"/></svg>
<svg style="position:absolute;left:992px;top:105px;" width="16" height="20" viewBox="0 0 16 20"><defs><linearGradient id="g31" x1="0" y1="0" x2="0" y2="1"><stop offset="0" stop-color="#6c97c6"/><stop offset="1" stop-color="#1c62a0"/></linearGradient></defs><path d="M16 0H7a6.2 6.2 0 0 0 0 12.4v7.2h2.6V2.6h1.8v17h2.6v-17H16z" fill="url(#g31)"/><path d="M9.6 2.6h0.9v17h-0.9zM12.4 2.6h0.8v17h-0.8z" fill="#9dbad8"/></svg>
<svg style="position:absolute;left:1022px;top:100px;" width="4" height="27" viewBox="0 0 4 27"><rect x="0" y="0.0" width="4" height="4" fill="#a39a84"/><rect x="0" y="0.0" width="2" height="2" fill="#d6cfbc"/><rect x="2" y="2.0" width="2" height="2" fill="#7f755d"/><rect x="0" y="7.4" width="4" height="4" fill="#a39a84"/><rect x="0" y="7.4" width="2" height="2" fill="#d6cfbc"/><rect x="2" y="9.4" width="2" height="2" fill="#7f755d"/><rect x="0" y="14.8" width="4" height="4" fill="#a39a84"/><rect x="0" y="14.8" width="2" height="2" fill="#d6cfbc"/><rect x="2" y="16.8" width="2" height="2" fill="#7f755d"/><rect x="0" y="22.2" width="4" height="4" fill="#a39a84"/><rect x="0" y="22.2" width="2" height="2" fill="#d6cfbc"/><rect x="2" y="24.2" width="2" height="2" fill="#7f755d"/></svg>
<svg style="position:absolute;left:1036px;top:97px;" width="28" height="32" viewBox="0 0 28 32"><defs><linearGradient id="g32" x1="0" y1="0" x2="0" y2="1"><stop offset="0" stop-color="#ffffff"/><stop offset="0.5" stop-color="#ffe9a6"/><stop offset="1" stop-color="#f5b83c"/></linearGradient><linearGradient id="g33" x1="0" y1="0" x2="0" y2="1"><stop offset="0" stop-color="#c4b87a"/><stop offset="1" stop-color="#6f8aa0"/></linearGradient></defs><rect x="17" y="6.5" width="7.5" height="1.8" fill="#bcc4dc"/><rect x="21" y="11" width="3.5" height="1.8" fill="#bcc4dc"/><rect x="21" y="15.5" width="3.5" height="1.8" fill="#bcc4dc"/><rect x="19" y="20" width="5.5" height="1.8" fill="#bcc4dc"/><rect x="14.5" y="24.5" width="4" height="1.8" fill="#bcc4dc"/><rect x="21" y="24.5" width="3.5" height="1.8" fill="#bcc4dc"/><rect x="14.5" y="29" width="10.0" height="1.8" fill="#bcc4dc"/><rect x="26" y="6" width="2" height="25.8" fill="url(#g33)"/><rect x="2" y="24" width="2" height="7.8" fill="#8a94a8"/><rect x="6" y="26" width="6" height="4" fill="#3f66b0"/><path d="M5 1.2h8.2v11.3h4L9 23 1 12.5h4z" fill="url(#g32)" stroke="#b8760c" stroke-width="2.2" stroke-linejoin="round"/></svg>
<svg style="position:absolute;left:1077px;top:109px;" width="14" height="8" viewBox="0 0 14 8"><path d="M0 0h14l-7 8z" fill="#2a2a2a"/></svg>
<svg style="position:absolute;left:1106px;top:97px;" width="28" height="32" viewBox="0 0 28 32"><defs><linearGradient id="g34" x1="0" y1="0" x2="0" y2="1"><stop offset="0" stop-color="#f5b83c"/><stop offset="0.5" stop-color="#ffe9a6"/><stop offset="1" stop-color="#ffffff"/></linearGradient><linearGradient id="g35" x1="0" y1="0" x2="0" y2="1"><stop offset="0" stop-color="#c4b87a"/><stop offset="1" stop-color="#6f8aa0"/></linearGradient></defs><rect x="16" y="4" width="9" height="1.8" fill="#bcc4dc"/><rect x="16" y="8" width="4" height="1.8" fill="#bcc4dc"/><rect x="22" y="8" width="3" height="1.8" fill="#bcc4dc"/><rect x="19.5" y="12" width="5.5" height="1.8" fill="#bcc4dc"/><rect x="22" y="16" width="3" height="1.8" fill="#bcc4dc"/><rect x="22" y="20" width="3" height="1.8" fill="#bcc4dc"/><rect x="18" y="24" width="7" height="1.8" fill="#bcc4dc"/><rect x="26" y="0" width="2" height="26" fill="url(#g35)"/><rect x="2" y="0" width="2" height="9.8" fill="#c4b87a"/><rect x="6" y="2" width="6" height="4" fill="#6a86c0"/><path d="M5.2 30.8h8.2v-11.3h4.4L9.2 9 1 19.5h4.2z" fill="url(#g34)" stroke="#b8760c" stroke-width="2.2" stroke-linejoin="round"/></svg>
<svg style="position:absolute;left:1147px;top:109px;" width="14" height="8" viewBox="0 0 14 8"><path d="M0 0h14l-7 8z" fill="#2a2a2a"/></svg>
<svg style="position:absolute;left:1173px;top:101px;" width="33" height="24" viewBox="0 0 33 24"><g transform="translate(3 0)"><defs><linearGradient id="g36" x1="0" y1="0" x2="0" y2="1"><stop offset="0" stop-color="#fffdf0"/><stop offset="0.5" stop-color="#fffdf0"/><stop offset="1" stop-color="#ffd77a"/></linearGradient></defs><path d="M1.5 12L14.5 1.2v5.6h12.2a1.6 1.6 0 0 1 1.6 1.6v7.2a1.6 1.6 0 0 1-1.6 1.6H14.5v5.6z" fill="url(#g36)" stroke="#b8760c" stroke-width="2.4" stroke-linejoin="round"/></g><circle cx="5" cy="6" r="5.5" fill="#f7ecc8" opacity="0.85"/><path d="M5 0.5v11M0.6 3.2l8.8 5.6M9.4 3.2L0.6 8.8" stroke="#2f5590" stroke-width="2"/></svg>
<svg style="position:absolute;left:1213px;top:101px;" width="30" height="24" viewBox="0 0 30 24"><defs><linearGradient id="g37" x1="0" y1="0" x2="0" y2="1"><stop offset="0" stop-color="#fffdf0"/><stop offset="0.5" stop-color="#fffdf0"/><stop offset="1" stop-color="#ffd77a"/></linearGradient></defs><path d="M1.5 12L14.5 1.2v5.6h12.2a1.6 1.6 0 0 1 1.6 1.6v7.2a1.6 1.6 0 0 1-1.6 1.6H14.5v5.6z" fill="url(#g37)" stroke="#b8760c" stroke-width="2.4" stroke-linejoin="round"/></svg>
<svg style="position:absolute;left:1256px;top:109px;" width="14" height="8" viewBox="0 0 14 8"><path d="M0 0h14l-7 8z" fill="#2a2a2a"/></svg>
<svg style="position:absolute;left:1285px;top:101px;" width="30" height="24" viewBox="0 0 30 24"><g transform="translate(30 0) scale(-1 1)"><defs><linearGradient id="g38" x1="0" y1="0" x2="0" y2="1"><stop offset="0" stop-color="#f7f7f7"/><stop offset="0.5" stop-color="#f7f7f7"/><stop offset="1" stop-color="#ededed"/></linearGradient></defs><path d="M1.5 12L14.5 1.2v5.6h12.2a1.6 1.6 0 0 1 1.6 1.6v7.2a1.6 1.6 0 0 1-1.6 1.6H14.5v5.6z" fill="url(#g38)" stroke="#ababab" stroke-width="2.4" stroke-linejoin="round"/></g></svg>
<svg style="position:absolute;left:1326px;top:109px;" width="14" height="8" viewBox="0 0 14 8"><path d="M0 0h14l-7 8z" fill="#77777c"/></svg>
<div style="position:absolute;left:1350.7px;top:96px;width:1.5px;height:34px;background:#70757f"></div>
<svg style="position:absolute;left:1360px;top:97px;" width="33" height="33" viewBox="0 0 33 33"><defs><linearGradient id="g39" x1="0" y1="0" x2="1" y2="1"><stop offset="0" stop-color="#cfeefa"/><stop offset="1" stop-color="#ffffff"/></linearGradient></defs><rect x="1" y="5" width="26" height="23" fill="url(#g39)" stroke="#a39668" stroke-width="2"/><rect x="0" y="4" width="28" height="5.5" fill="#5da8dc"/><rect x="0" y="4" width="28" height="1.6" fill="#3571b0"/><path d="M17 17.5l5.5-5" stroke="#222" stroke-width="2"/><ellipse cx="20" cy="21" rx="3.6" ry="2" fill="#5d93a8" opacity="0.45" transform="rotate(40 20 21)"/><defs><linearGradient id="g40" x1="0" y1="0" x2="1" y2="1"><stop offset="0" stop-color="#7fd05a"/><stop offset="1" stop-color="#1f8a2c"/></linearGradient></defs><g transform="rotate(40 25 7)"><rect x="21.5" y="3" width="7" height="8" rx="1.5" fill="url(#g40)" stroke="#1d8530" stroke-width="1"/><ellipse cx="25" cy="2.6" rx="5.6" ry="2.8" fill="#57b945" stroke="#1d8530" stroke-width="1"/><ellipse cx="25" cy="11" rx="4.4" ry="2" fill="#2f9a38"/></g></svg>
<div style="position:absolute;left:2414px;top:94px;width:184px;height:38px;background:#fff;border:1.5px solid #8e8e8e;box-sizing:border-box"></div>
<div style="position:absolute;left:2424px;top:103.70px;white-space:pre;font:normal normal 23px/1 'Liberation Sans', sans-serif;letter-spacing:-0.141px;color:#6e6e6e;">Quick Access</div>
<svg style="position:absolute;left:2606px;top:83px;" width="130" height="60" viewBox="0 0 130 60"><defs><linearGradient id="g41" x1="0" y1="0" x2="0" y2="1"><stop offset="0" stop-color="#f4f6fc"/><stop offset="1" stop-color="#e5e9f6"/></linearGradient></defs><path d="M2 0H130V59H2z" fill="url(#g41)"/><path d="M19.500 0.800c-2.200 0.300-3.200 1.500-3.200 3.400V51.500c0 3.200-1.600 5.300-5 5.800" fill="none" stroke="#a4abc2" stroke-width="1.300"/></svg>
<svg style="position:absolute;left:2610px;top:94px;" width="4" height="40" viewBox="0 0 4 40"><rect x="0" y="0.0" width="4" height="4" fill="#a39a84"/><rect x="0" y="0.0" width="2" height="2" fill="#d6cfbc"/><rect x="2" y="2.0" width="2" height="2" fill="#7f755d"/><rect x="0" y="11.7" width="4" height="4" fill="#a39a84"/><rect x="0" y="11.7" width="2" height="2" fill="#d6cfbc"/><rect x="2" y="13.7" width="2" height="2" fill="#7f755d"/><rect x="0" y="23.4" width="4" height="4" fill="#a39a84"/><rect x="0" y="23.4" width="2" height="2" fill="#d6cfbc"/><rect x="2" y="25.4" width="2" height="2" fill="#7f755d"/><rect x="0" y="35.1" width="4" height="4" fill="#a39a84"/><rect x="0" y="35.1" width="2" height="2" fill="#d6cfbc"/><rect x="2" y="37.1" width="2" height="2" fill="#7f755d"/></svg>
<svg style="position:absolute;left:2639px;top:101px;" width="30" height="30" viewBox="0 0 30 30"><defs><linearGradient id="g42" x1="0" y1="0" x2="0" y2="1"><stop offset="0" stop-color="#cfe8fa"/><stop offset="1" stop-color="#ffffff"/></linearGradient></defs><rect x="1" y="5" width="22" height="22" rx="2" fill="url(#g42)" stroke="#7f7246" stroke-width="2"/><path d="M2 4h20a2 2 0 0 1 0 0v5.500H0V6a2 2 0 0 1 2-2z" fill="#5a9fe0"/><rect x="1.500" y="4" width="21" height="1.600" fill="#2f6ab0"/><path d="M9 9.500v17.500M1 18.500h22" stroke="#86784a" stroke-width="2"/><path d="M10 27l11-9" stroke="#f0d890" stroke-width="2.200" stroke-dasharray="2 2.200"/><defs><radialGradient id="g43" cx="0.5" cy="0.5" r="0.6"><stop offset="0" stop-color="#f3e2a4"/><stop offset="0.55" stop-color="#c9a440"/><stop offset="1" stop-color="#a07a14"/></radialGradient></defs><path d="M21.2 0.09999999999999964L28.4 7.3L21.2 14.5L14.0 7.3z" fill="url(#g43)" stroke="#9c7a1c" stroke-width="1"/><path d="M21.2 3.3v8M17.2 7.3h8" stroke="#fff" stroke-width="2.200"/></svg>
<div style="position:absolute;left:2675px;top:98px;width:1.3px;height:34px;background:#6c707c"></div>
<div style="position:absolute;left:2681px;top:96px;width:39px;height:37px;background:#b9d6f7;border:1px solid #86bdf5;box-sizing:border-box"></div>
<svg style="position:absolute;left:2685px;top:98px;" width="32" height="34" viewBox="0 0 32 34"><defs><radialGradient id="g44" cx="0.5" cy="0.5" r="0.7"><stop offset="0" stop-color="#fbeac0"/><stop offset="1" stop-color="#dcb784"/></radialGradient></defs><rect x="4" y="2.500" width="14.500" height="13.500" fill="url(#g44)" stroke="#7a3f26" stroke-width="2.200"/><path d="M11.200 0v17.500M1.500 9.200h19.500" stroke="#7a3f26" stroke-width="2.200"/><path d="M28 1.800v9.700c0 3-1.600 4.300-4 4.300-1 0-1.900-.2-2.700-.7" fill="none" stroke="#2c6aa0" stroke-width="3.600"/><defs><radialGradient id="g45" cx="0.4" cy="0.3" r="0.75"><stop offset="0" stop-color="#b9aee0"/><stop offset="0.55" stop-color="#6a58a8"/><stop offset="1" stop-color="#4a3a8c"/></radialGradient></defs><circle cx="17.2" cy="26.1" r="6.9" fill="url(#g45)"/><circle cx="6.900" cy="20" r="8" fill="#fff"/><defs><radialGradient id="g46" cx="0.4" cy="0.3" r="0.75"><stop offset="0" stop-color="#a8dca0"/><stop offset="0.55" stop-color="#3f944a"/><stop offset="1" stop-color="#1f7a33"/></radialGradient></defs><circle cx="6.9" cy="20" r="6.8" fill="url(#g46)"/></svg>
<svg style="position:absolute;left:1px;top:142px;" width="59" height="106" viewBox="0 0 59 106"><path d="M1 1H58V97L50 105H9L1 97z" fill="#e1e6f6" stroke="#b3bad1" stroke-width="1.800"/><path d="M3 3H56V96L49 103H10L3 96z" fill="none" stroke="#fff" stroke-width="1.800"/></svg>
<svg style="position:absolute;left:16px;top:155px;" width="32" height="5" viewBox="0 0 32 5"><rect x="0.0" y="0" width="5" height="5" fill="#fbfbf6"/><rect x="1.0" y="1" width="4" height="4" fill="#a39a84"/><rect x="2.5" y="2.500" width="2.500" height="2.500" fill="#7f755d"/><rect x="8.5" y="0" width="5" height="5" fill="#fbfbf6"/><rect x="9.5" y="1" width="4" height="4" fill="#a39a84"/><rect x="11.0" y="2.500" width="2.500" height="2.500" fill="#7f755d"/><rect x="17.0" y="0" width="5" height="5" fill="#fbfbf6"/><rect x="18.0" y="1" width="4" height="4" fill="#a39a84"/><rect x="19.5" y="2.500" width="2.500" height="2.500" fill="#7f755d"/><rect x="25.5" y="0" width="5" height="5" fill="#fbfbf6"/><rect x="26.5" y="1" width="4" height="4" fill="#a39a84"/><rect x="28.0" y="2.500" width="2.500" height="2.500" fill="#7f755d"/></svg>
<svg style="position:absolute;left:21px;top:173px;" width="17" height="16" viewBox="0 0 17 16"><rect x="6" y="1" width="9.5" height="7.5" fill="none" stroke="#6b625b" stroke-width="2"/><rect x="5.5" y="0" width="10.5" height="3.4" fill="#6b625b"/><rect x="1" y="7.5" width="9.5" height="7.5" fill="#e1e6f6" stroke="#6b625b" stroke-width="2"/><rect x="0" y="6.5" width="11.5" height="3.4" fill="#6b625b"/></svg>
<svg style="position:absolute;left:21px;top:205px;" width="19" height="26" viewBox="0 0 19 26"><path d="M1 0v26M1 7h8M1 19h8" stroke="#6d7484" stroke-width="2" fill="none"/><rect x="8.5" y="2" width="10" height="10" fill="#c8742a"/><rect x="10.3" y="3.8" width="2.6" height="2.6" fill="#fbe2a8"/><rect x="14.3" y="3.8" width="2.6" height="2.6" fill="#fbe2a8"/><rect x="10.3" y="7.8" width="2.6" height="2.6" fill="#fbe2a8"/><rect x="14.3" y="7.8" width="2.6" height="2.6" fill="#fbe2a8"/><rect x="8.5" y="14" width="10" height="10" fill="#c8742a"/><rect x="10.3" y="15.8" width="2.6" height="2.6" fill="#fbe2a8"/><rect x="14.3" y="15.8" width="2.6" height="2.6" fill="#fbe2a8"/><rect x="10.3" y="19.8" width="2.6" height="2.6" fill="#fbe2a8"/><rect x="14.3" y="19.8" width="2.6" height="2.6" fill="#fbe2a8"/></svg>
<div style="position:absolute;left:62px;top:142px;width:1853px;height:1549px;background:#fff;border:1px solid #bcbdc4;border-radius:11px 11px 9px 9px;box-sizing:border-box;border-top-color:#c4c5cb"></div>
<div style="position:absolute;left:63px;top:143px;width:1851px;height:49px;background:linear-gradient(#d6e3f3,#cfdeee 50%,#d0dff0);border-radius:10px 10px 0 0;"></div>
<div style="position:absolute;left:63px;top:192px;width:1851px;height:1px;background:#a8b6cf"></div>
<div style="position:absolute;left:361px;top:144px;width:372px;height:50px;background:#fff;border-radius:12px 12px 0 0;border:1px solid #b4c4dd;border-bottom:none;box-sizing:border-box"></div>
<svg style="position:absolute;left:78px;top:156px;" width="22" height="28" viewBox="0 0 22 28"><defs><linearGradient id="g47" x1="0" y1="0" x2="0" y2="1"><stop offset="0" stop-color="#b8891e"/><stop offset="1" stop-color="#8f7a42"/></linearGradient><linearGradient id="g48" x1="0" y1="0" x2="0" y2="1"><stop offset="0" stop-color="#ffffff"/><stop offset="1" stop-color="#dfe7f6"/></linearGradient></defs><path d="M1 1h13l7 7v19H1z" fill="url(#g48)" stroke="url(#g47)" stroke-width="2"/><path d="M14 1.5v7h6.5z" fill="#f1d89a"/><path d="M12.5 6v11.2c0 3-1.6 4.6-4.2 4.6-1.2 0-2.3-.3-3.2-.9" fill="none" stroke="#2c6aa0" stroke-width="3.600"/></svg>
<div style="position:absolute;left:113px;top:161.00px;white-space:pre;font:normal normal 23px/1 'Liberation Sans', sans-serif;letter-spacing:-0.210px;color:#000;">EnumExample.java</div>
<svg style="position:absolute;left:374px;top:156px;" width="22" height="28" viewBox="0 0 22 28"><defs><linearGradient id="g49" x1="0" y1="0" x2="0" y2="1"><stop offset="0" stop-color="#b8891e"/><stop offset="1" stop-color="#8f7a42"/></linearGradient><linearGradient id="g50" x1="0" y1="0" x2="0" y2="1"><stop offset="0" stop-color="#ffffff"/><stop offset="1" stop-color="#dfe7f6"/></linearGradient></defs><path d="M1 1h13l7 7v19H1z" fill="url(#g50)" stroke="url(#g49)" stroke-width="2"/><path d="M14 1.5v7h6.5z" fill="#f1d89a"/><path d="M12.5 6v11.2c0 3-1.6 4.6-4.2 4.6-1.2 0-2.3-.3-3.2-.9" fill="none" stroke="#2c6aa0" stroke-width="3.600"/></svg>
<div style="position:absolute;left:408.5px;top:161.00px;white-space:pre;font:normal normal 23px/1 'Liberation Sans', sans-serif;letter-spacing:0.046px;color:#000;">EnumerationExample.java</div>
<svg style="position:absolute;left:695.3px;top:159.8px;" width="20" height="20" viewBox="0 0 20 20"><path d="M0.70 0.70L4.82 0.70L8.94 4.82L11.00 4.82L15.12 0.70L19.24 0.70L19.24 4.82L15.12 8.94L15.12 11.00L19.24 15.12L19.24 19.24L15.12 19.24L11.00 15.12L8.94 15.12L4.82 19.24L0.70 19.24L0.70 15.12L4.82 11.00L4.82 8.94L0.70 4.82z" fill="#fff" stroke="#5a5a5a" stroke-width="1.300" stroke-linejoin="miter"/></svg>
<svg style="position:absolute;left:1831px;top:155px;" width="20" height="8" viewBox="0 0 20 8"><rect x="0.75" y="0.75" width="18" height="6" fill="#fff" stroke="#5c5c5c" stroke-width="1.250"/></svg>
<svg style="position:absolute;left:1870px;top:155px;" width="20" height="20" viewBox="0 0 20 20"><rect x="0.75" y="0.75" width="18" height="18" fill="#fff" stroke="#5c5c5c" stroke-width="1.250"/><path d="M0.75 4.5h18" stroke="#5c5c5c" stroke-width="1.250"/></svg>
<div style="position:absolute;left:68px;top:198px;width:24px;height:1455px;background:#f8f8f8"></div>
<div style="position:absolute;left:68px;top:1653px;width:84px;height:33px;background:#f8f8f8"></div>
<div style="position:absolute;left:150px;top:198px;width:1px;height:1455px;background:#f3f3f3"></div>
<div style="position:absolute;left:68px;top:462px;width:24px;height:660px;background-color:#fff;background-image:conic-gradient(#0a84ff 25%,#fff 0 50%,#0a84ff 0 75%,#fff 0);background-size:4px 4px;border-top:2px solid #0a84ff;border-bottom:2px solid #0a84ff;box-sizing:border-box"></div>
<div style="position:absolute;left:156px;top:1122px;width:1695px;height:44px;background:#e8f2fe"></div>
<div style="position:absolute;left:156px;top:1122px;width:4px;height:44px;background:#1a1000"></div>
<div style="position:absolute;left:1851px;top:198px;width:33px;height:1455px;background:#f0f0f0"></div>
<div style="position:absolute;left:152px;top:1653px;width:1732px;height:33px;background:#f0f0f0"></div>
<div style="position:absolute;left:1884px;top:198px;width:26px;height:1488px;background:#f8f8f8"></div>
<svg style="position:absolute;left:1858.4px;top:207px;" width="18" height="18" viewBox="-9 -9 18 18"><path d="M-4.800 2.600L0 -2.400L4.800 2.600" fill="none" stroke="#c1c1c1" stroke-width="2.700"/></svg>
<svg style="position:absolute;left:1858.4px;top:1626.5px;" width="18" height="18" viewBox="-9 -9 18 18"><path d="M-4.800 -2.600L0 2.400L4.800 -2.600" fill="none" stroke="#c1c1c1" stroke-width="2.700"/></svg>
<svg style="position:absolute;left:159.7px;top:1660.5px;" width="18" height="18" viewBox="-9 -9 18 18"><path d="M2.600 -4.800L-2.400 0L2.600 4.800" fill="none" stroke="#c1c1c1" stroke-width="2.700"/></svg>
<svg style="position:absolute;left:1823.5px;top:1660.5px;" width="18" height="18" viewBox="-9 -9 18 18"><path d="M-2.600 -4.800L2.400 0L-2.600 4.800" fill="none" stroke="#c1c1c1" stroke-width="2.700"/></svg>
<div style="position:absolute;left:71.6px;top:204.40px;width:60px;text-align:right;white-space:pre;font:33.22px/1 'DejaVu Sans Mono', 'Liberation Mono', monospace;letter-spacing:0.02px;color:#787878">1</div>
<div style="position:absolute;left:71.6px;top:248.40px;width:60px;text-align:right;white-space:pre;font:33.22px/1 'DejaVu Sans Mono', 'Liberation Mono', monospace;letter-spacing:0.02px;color:#787878">2</div>
<div style="position:absolute;left:156px;top:248.40px;white-space:pre;font:33.22px/1 'DejaVu Sans Mono', 'Liberation Mono', monospace;letter-spacing:0.02px;color:#000"><b style="color:#7f0055">enum</b> WeekDay{</div>
<div style="position:absolute;left:71.6px;top:292.40px;width:60px;text-align:right;white-space:pre;font:33.22px/1 'DejaVu Sans Mono', 'Liberation Mono', monospace;letter-spacing:0.02px;color:#787878">3</div>
<div style="position:absolute;left:156px;top:292.40px;white-space:pre;font:33.22px/1 'DejaVu Sans Mono', 'Liberation Mono', monospace;letter-spacing:0.02px;color:#000">    <b style="color:#0000c0"><i>MONDAY</i></b>, <b style="color:#0000c0"><i>TUESDAY</i></b>, <b style="color:#0000c0"><i>WEDNESSDAY</i></b>, <b style="color:#0000c0"><i>THURSDAY</i></b>, <b style="color:#0000c0"><i>FRIDAY</i></b>, <b style="color:#0000c0"><i>SATURDAY</i></b>, <b style="color:#0000c0"><i>SUNDAY</i></b>;</div>
<div style="position:absolute;left:71.6px;top:336.40px;width:60px;text-align:right;white-space:pre;font:33.22px/1 'DejaVu Sans Mono', 'Liberation Mono', monospace;letter-spacing:0.02px;color:#787878">4</div>
<div style="position:absolute;left:156px;top:336.40px;white-space:pre;font:33.22px/1 'DejaVu Sans Mono', 'Liberation Mono', monospace;letter-spacing:0.02px;color:#000">}</div>
<div style="position:absolute;left:71.6px;top:380.40px;width:60px;text-align:right;white-space:pre;font:33.22px/1 'DejaVu Sans Mono', 'Liberation Mono', monospace;letter-spacing:0.02px;color:#787878">5</div>
<div style="position:absolute;left:71.6px;top:424.40px;width:60px;text-align:right;white-space:pre;font:33.22px/1 'DejaVu Sans Mono', 'Liberation Mono', monospace;letter-spacing:0.02px;color:#787878">6</div>
<div style="position:absolute;left:71.6px;top:468.40px;width:60px;text-align:right;white-space:pre;font:33.22px/1 'DejaVu Sans Mono', 'Liberation Mono', monospace;letter-spacing:0.02px;color:#787878">7</div>
<div style="position:absolute;left:156px;top:468.40px;white-space:pre;font:33.22px/1 'DejaVu Sans Mono', 'Liberation Mono', monospace;letter-spacing:0.02px;color:#000"><b style="color:#7f0055">public</b> <b style="color:#7f0055">class</b> EnumerationExample {</div>
<div style="position:absolute;left:71.6px;top:512.40px;width:60px;text-align:right;white-space:pre;font:33.22px/1 'DejaVu Sans Mono', 'Liberation Mono', monospace;letter-spacing:0.02px;color:#787878">8</div>
<div style="position:absolute;left:71.6px;top:556.40px;width:60px;text-align:right;white-space:pre;font:33.22px/1 'DejaVu Sans Mono', 'Liberation Mono', monospace;letter-spacing:0.02px;color:#787878">9</div>
<div style="position:absolute;left:156px;top:556.40px;white-space:pre;font:33.22px/1 'DejaVu Sans Mono', 'Liberation Mono', monospace;letter-spacing:0.02px;color:#000">    <b style="color:#7f0055">public</b> <b style="color:#7f0055">static</b> <b style="color:#7f0055">void</b> main(String[] <span style="color:#6a3e3e">args</span>) {</div>
<div style="position:absolute;left:71.6px;top:600.40px;width:60px;text-align:right;white-space:pre;font:33.22px/1 'DejaVu Sans Mono', 'Liberation Mono', monospace;letter-spacing:0.02px;color:#787878">10</div>
<div style="position:absolute;left:71.6px;top:644.40px;width:60px;text-align:right;white-space:pre;font:33.22px/1 'DejaVu Sans Mono', 'Liberation Mono', monospace;letter-spacing:0.02px;color:#787878">11</div>
<div style="position:absolute;left:156px;top:644.40px;white-space:pre;font:33.22px/1 'DejaVu Sans Mono', 'Liberation Mono', monospace;letter-spacing:0.02px;color:#000">        WeekDay <span style="color:#6a3e3e">day</span> = WeekDay.<b style="color:#0000c0"><i>FRIDAY</i></b>;</div>
<div style="position:absolute;left:71.6px;top:688.40px;width:60px;text-align:right;white-space:pre;font:33.22px/1 'DejaVu Sans Mono', 'Liberation Mono', monospace;letter-spacing:0.02px;color:#787878">12</div>
<div style="position:absolute;left:71.6px;top:732.40px;width:60px;text-align:right;white-space:pre;font:33.22px/1 'DejaVu Sans Mono', 'Liberation Mono', monospace;letter-spacing:0.02px;color:#787878">13</div>
<div style="position:absolute;left:156px;top:732.40px;white-space:pre;font:33.22px/1 'DejaVu Sans Mono', 'Liberation Mono', monospace;letter-spacing:0.02px;color:#000">        System.<b style="color:#0000c0"><i>out</i></b>.println(<span style="color:#2a00ff">"Today is "</span> + <span style="color:#6a3e3e">day</span>);</div>
<div style="position:absolute;left:71.6px;top:776.40px;width:60px;text-align:right;white-space:pre;font:33.22px/1 'DejaVu Sans Mono', 'Liberation Mono', monospace;letter-spacing:0.02px;color:#787878">14</div>
<div style="position:absolute;left:71.6px;top:820.40px;width:60px;text-align:right;white-space:pre;font:33.22px/1 'DejaVu Sans Mono', 'Liberation Mono', monospace;letter-spacing:0.02px;color:#787878">15</div>
<div style="position:absolute;left:156px;top:820.40px;white-space:pre;font:33.22px/1 'DejaVu Sans Mono', 'Liberation Mono', monospace;letter-spacing:0.02px;color:#000">        System.<b style="color:#0000c0"><i>out</i></b>.println(<span style="color:#2a00ff">"\nAll WeekDays: "</span>);</div>
<div style="position:absolute;left:71.6px;top:864.40px;width:60px;text-align:right;white-space:pre;font:33.22px/1 'DejaVu Sans Mono', 'Liberation Mono', monospace;letter-spacing:0.02px;color:#787878">16</div>
<div style="position:absolute;left:156px;top:864.40px;white-space:pre;font:33.22px/1 'DejaVu Sans Mono', 'Liberation Mono', monospace;letter-spacing:0.02px;color:#000">        <b style="color:#7f0055">for</b>(WeekDay <span style="color:#6a3e3e">d</span>:WeekDay.<i>values</i>())</div>
<div style="position:absolute;left:71.6px;top:908.40px;width:60px;text-align:right;white-space:pre;font:33.22px/1 'DejaVu Sans Mono', 'Liberation Mono', monospace;letter-spacing:0.02px;color:#787878">17</div>
<div style="position:absolute;left:156px;top:908.40px;white-space:pre;font:33.22px/1 'DejaVu Sans Mono', 'Liberation Mono', monospace;letter-spacing:0.02px;color:#000">            System.<b style="color:#0000c0"><i>out</i></b>.println(<span style="color:#6a3e3e">d</span>);</div>
<div style="position:absolute;left:71.6px;top:952.40px;width:60px;text-align:right;white-space:pre;font:33.22px/1 'DejaVu Sans Mono', 'Liberation Mono', monospace;letter-spacing:0.02px;color:#787878">18</div>
<div style="position:absolute;left:71.6px;top:996.40px;width:60px;text-align:right;white-space:pre;font:33.22px/1 'DejaVu Sans Mono', 'Liberation Mono', monospace;letter-spacing:0.02px;color:#787878">19</div>
<div style="position:absolute;left:156px;top:996.40px;white-space:pre;font:33.22px/1 'DejaVu Sans Mono', 'Liberation Mono', monospace;letter-spacing:0.02px;color:#000">    }</div>
<div style="position:absolute;left:71.6px;top:1040.40px;width:60px;text-align:right;white-space:pre;font:33.22px/1 'DejaVu Sans Mono', 'Liberation Mono', monospace;letter-spacing:0.02px;color:#787878">20</div>
<div style="position:absolute;left:71.6px;top:1084.40px;width:60px;text-align:right;white-space:pre;font:33.22px/1 'DejaVu Sans Mono', 'Liberation Mono', monospace;letter-spacing:0.02px;color:#787878">21</div>
<div style="position:absolute;left:156px;top:1084.40px;white-space:pre;font:33.22px/1 'DejaVu Sans Mono', 'Liberation Mono', monospace;letter-spacing:0.02px;color:#000">}</div>
<div style="position:absolute;left:71.6px;top:1128.40px;width:60px;text-align:right;white-space:pre;font:33.22px/1 'DejaVu Sans Mono', 'Liberation Mono', monospace;letter-spacing:0.02px;color:#787878">22</div>
<svg style="position:absolute;left:133.5px;top:562.5px;" width="17" height="17" viewBox="0 0 17 17"><circle cx="8.5" cy="8.5" r="7.4" fill="#fff" stroke="#8d98ad" stroke-width="1.5"/><path d="M4.5 8.5h8" stroke="#62728e" stroke-width="1.8"/></svg>
<div style="position:absolute;left:1924px;top:142px;width:750px;height:1550px;background:#fff;border-radius:11px 11px 9px 9px;"></div>
<div style="position:absolute;left:1924px;top:142px;width:750px;height:52px;background:#f4f6fc;border-radius:11px 14px 0 0;"></div>
<div style="position:absolute;left:1924px;top:143px;width:185px;height:51px;background:linear-gradient(#dde6f0,#eef2f8 55%,#fff);border-radius:12px 14px 0 0;"></div>
<div style="position:absolute;left:1924px;top:194px;width:750px;height:1px;background:#fbfcfe"></div>
<svg style="position:absolute;left:1938px;top:156px;" width="26" height="27" viewBox="0 0 26 27"><defs><linearGradient id="g51" x1="0" y1="0" x2="1" y2="1"><stop offset="0" stop-color="#ffffff"/><stop offset="1" stop-color="#dcecfb"/></linearGradient></defs><rect x="1.5" y="1.5" width="23" height="19" rx="2" fill="url(#g51)" stroke="#3b62ad" stroke-width="3"/><rect x="10.0" y="20.5" width="6" height="3" fill="#2f55a0"/><rect x="4.0" y="23.4" width="18" height="2.6" fill="#3b62ad"/><rect x="3.500" y="3.500" width="19" height="15" fill="none" stroke="#6f7890" stroke-width="1" opacity="0.700"/><path d="M6.500 8h8M6.500 12h12" stroke="#3b4f9c" stroke-width="2"/></svg>
<div style="position:absolute;left:1974.5px;top:160.80px;white-space:pre;font:normal normal 23px/1 'Liberation Sans', sans-serif;letter-spacing:-0.065px;color:#000;">Console</div>
<svg style="position:absolute;left:2073.3px;top:159.8px;" width="20" height="20" viewBox="0 0 20 20"><path d="M0.70 0.70L4.82 0.70L8.94 4.82L11.00 4.82L15.12 0.70L19.24 0.70L19.24 4.82L15.12 8.94L15.12 11.00L19.24 15.12L19.24 19.24L15.12 19.24L11.00 15.12L8.94 15.12L4.82 19.24L0.70 19.24L0.70 15.12L4.82 11.00L4.82 8.94L0.70 4.82z" fill="#fff" stroke="#5a5a5a" stroke-width="1.300" stroke-linejoin="miter"/></svg>
<svg style="position:absolute;left:2589px;top:155px;" width="20" height="8" viewBox="0 0 20 8"><rect x="0.75" y="0.75" width="18" height="6" fill="#fff" stroke="#5c5c5c" stroke-width="1.250"/></svg>
<svg style="position:absolute;left:2628px;top:155px;" width="20" height="20" viewBox="0 0 20 20"><rect x="0.75" y="0.75" width="18" height="18" fill="#fff" stroke="#5c5c5c" stroke-width="1.250"/><path d="M0.75 4.5h18" stroke="#5c5c5c" stroke-width="1.250"/></svg>
<div style="position:absolute;left:2150px;top:198px;width:508px;height:38px;background:#f4f6fc"></div>
<svg style="position:absolute;left:2159px;top:207px;" width="22" height="22" viewBox="0 0 22 22"><rect x="1" y="1" width="20" height="20" rx="3" fill="#cfcfcf" stroke="#a4a4a4" stroke-width="1.6"/><rect x="4.5" y="4.5" width="13" height="13" fill="#9c9c9c"/></svg>
<svg style="position:absolute;left:2195px;top:203px;" width="29" height="28" viewBox="0 0 29 28"><path d="M5.5 5L23.5 23M23.5 5L5.5 23" stroke="#636363" stroke-width="8.1" stroke-linecap="round"/><path d="M5.5 5L23.5 23M23.5 5L5.5 23" stroke="#7b7b7b" stroke-width="6.5" stroke-linecap="round"/></svg>
<svg style="position:absolute;left:2232px;top:198px;" width="32" height="36" viewBox="0 0 32 36"><path d="M4 5L18 19M18 5L4 19" stroke="#5a5a5a" stroke-width="6.4" stroke-linecap="round"/><path d="M4 5L18 19M18 5L4 19" stroke="#d6d6d6" stroke-width="4.8" stroke-linecap="round"/><path d="M12.0 15.5L27.0 30.5M27.0 15.5L12.0 30.5" stroke="#636363" stroke-width="7.199999999999999" stroke-linecap="round"/><path d="M12.0 15.5L27.0 30.5M27.0 15.5L12.0 30.5" stroke="#7b7b7b" stroke-width="5.6" stroke-linecap="round"/></svg>
<div style="position:absolute;left:2268.6px;top:200px;width:1.5px;height:34px;background:#8a8f98"></div>
<svg style="position:absolute;left:2280px;top:201px;" width="31" height="31" viewBox="0 0 31 31"><defs><linearGradient id="g52" x1="0" y1="0" x2="0" y2="1"><stop offset="0" stop-color="#c8b878"/><stop offset="1" stop-color="#9a9888"/></linearGradient><linearGradient id="g53" x1="0" y1="0" x2="0" y2="1"><stop offset="0" stop-color="#f4f6ff"/><stop offset="1" stop-color="#e6ebf8"/></linearGradient></defs><path d="M1 1h14l7 7v19h-21z" fill="url(#g53)" stroke="url(#g52)" stroke-width="2" stroke-linejoin="miter"/><path d="M15 1v7h7" fill="#f0dfa8" stroke="url(#g52)" stroke-width="1.6"/><rect x="4" y="6" width="8" height="1.8" fill="#5a76b4"/><rect x="4" y="10" width="13" height="1.8" fill="#5a76b4"/><rect x="4" y="14" width="11" height="1.8" fill="#5a76b4"/><rect x="4" y="18" width="11" height="1.8" fill="#5a76b4"/><rect x="4" y="22" width="11" height="1.8" fill="#5a76b4"/><rect x="4" y="26" width="8" height="1.8" fill="#5a76b4"/><path d="M19.4 18.4L28.6 27.6M28.6 18.4L19.4 27.6" stroke="#3c3c3c" stroke-width="5.0" stroke-linecap="round"/><path d="M19.4 18.4L28.6 27.6M28.6 18.4L19.4 27.6" stroke="#6a6a6a" stroke-width="3.4" stroke-linecap="round"/></svg>
<svg style="position:absolute;left:2318px;top:203px;" width="31" height="31" viewBox="0 0 31 31"><defs><linearGradient id="g54" x1="0" y1="0" x2="0" y2="1"><stop offset="0" stop-color="#b8a468"/><stop offset="1" stop-color="#5a7eb0"/></linearGradient></defs><rect x="4" y="1.2" width="25" height="25" fill="#eef8fe" stroke="url(#g54)" stroke-width="2.2"/><rect x="21" y="2.5" width="7" height="22.5" fill="#dfe6f2" stroke="#8fa4c4" stroke-width="1"/><rect x="23" y="4.5" width="3" height="3" fill="#2f4f9a"/><rect x="23" y="20" width="3" height="3" fill="#2f4f9a"/><rect x="21.500" y="9.500" width="6" height="3" fill="#5a7098"/><defs><linearGradient id="g55" x1="0" y1="0" x2="0" y2="1"><stop offset="0" stop-color="#f7d768"/><stop offset="1" stop-color="#c77f12"/></linearGradient></defs><path d="M4.5 17v-3.500a4.500 4.500 0 0 1 9 0V17" fill="none" stroke="#b8860b" stroke-width="2.600"/><rect x="1" y="17" width="16" height="12" rx="1.5" fill="url(#g55)" stroke="#a8610c" stroke-width="1.4"/><path d="M2 20.500h14M2 24h14" stroke="#e0a838" stroke-width="1"/><rect x="8" y="21" width="2" height="5" fill="#3a2a10"/></svg>
<svg style="position:absolute;left:2357.5px;top:200.5px;opacity:0.5" width="32" height="30" viewBox="0 0 32 30"><defs><linearGradient id="g56" x1="0" y1="0" x2="0" y2="1"><stop offset="0" stop-color="#c8b878"/><stop offset="1" stop-color="#9a9888"/></linearGradient><linearGradient id="g57" x1="0" y1="0" x2="0" y2="1"><stop offset="0" stop-color="#f4f6ff"/><stop offset="1" stop-color="#e6ebf8"/></linearGradient></defs><path d="M1 1h14l7 7v19h-21z" fill="url(#g57)" stroke="url(#g56)" stroke-width="2" stroke-linejoin="miter"/><path d="M15 1v7h7" fill="#f0dfa8" stroke="url(#g56)" stroke-width="1.6"/><rect x="4" y="6" width="12" height="1.8" fill="#5a76b4"/><rect x="4" y="10" width="10" height="1.8" fill="#5a76b4"/><rect x="4" y="14" width="8" height="1.8" fill="#5a76b4"/><rect x="4" y="18" width="4" height="1.8" fill="#5a76b4"/><rect x="4" y="22" width="4" height="1.8" fill="#5a76b4"/><defs><linearGradient id="g58" x1="0" y1="0" x2="0" y2="1"><stop offset="0" stop-color="#fffbe6"/><stop offset="1" stop-color="#ffd98a"/></linearGradient></defs><path d="M26 5.5v13h-7.5v-4.5l-8 6.5 8 6.5v-4.5h11.5v-17z" fill="url(#g58)" stroke="#b8760c" stroke-width="2" stroke-linejoin="round"/></svg>
<div style="position:absolute;left:2392px;top:198px;width:39px;height:38px;background:#b9d6f7;border:1px solid #86bdf5;box-sizing:border-box"></div>
<div style="position:absolute;left:2430px;top:198px;width:40px;height:38px;background:#b9d6f7;border:1px solid #86bdf5;box-sizing:border-box"></div>
<svg style="position:absolute;left:2397px;top:202px;" width="32" height="31" viewBox="0 0 32 31"><g transform="translate(0 12)"><rect x="1.300" y="1.300" width="14" height="11" fill="#eaf3fc" stroke="#3f72bc" stroke-width="2.600"/><rect x="6" y="13.500" width="5" height="2.500" fill="#3f72bc"/><rect x="2.500" y="16" width="12" height="2.400" fill="#3f72bc"/></g><path d="M9 4L28 4L31 24L10 18z" fill="#4a5f8c" opacity="0.250"/><rect x="9.300" y="1.300" width="19.500" height="15" fill="#f4f9fe" stroke="#3f72bc" stroke-width="2.600"/><path d="M13 6.500h8M13 10.500h12" stroke="#4a5fa8" stroke-width="1.800"/></svg>
<svg style="position:absolute;left:2436px;top:202px;" width="32" height="31" viewBox="0 0 32 31"><g transform="translate(0 12)"><rect x="1.300" y="1.300" width="14" height="11" fill="#eaf3fc" stroke="#3f72bc" stroke-width="2.600"/><rect x="6" y="13.500" width="5" height="2.500" fill="#3f72bc"/><rect x="2.500" y="16" width="12" height="2.400" fill="#3f72bc"/></g><path d="M9 4L28 4L31 24L10 18z" fill="#4a5f8c" opacity="0.250"/><rect x="9.300" y="1.300" width="19.500" height="15" fill="#f4f9fe" stroke="#3f72bc" stroke-width="2.600"/><path d="M12.500 5l6 7M18.500 5l-6 7" stroke="#e0252a" stroke-width="2.800"/><path d="M21 6.500h5M21 10.500h5" stroke="#4a5fa8" stroke-width="1.800"/></svg>
<div style="position:absolute;left:2472px;top:200px;width:1.5px;height:34px;background:#8a8f98"></div>
<svg style="position:absolute;left:2485px;top:201px;" width="31" height="31" viewBox="0 0 31 31"><defs><linearGradient id="g59" x1="0" y1="0" x2="1" y2="1"><stop offset="0" stop-color="#ffffff"/><stop offset="1" stop-color="#e8f1fb"/></linearGradient></defs><rect x="1" y="10" width="24" height="18" fill="url(#g59)" stroke="#a39668" stroke-width="2"/><rect x="0" y="9" width="26" height="5" fill="#5da8dc"/><rect x="0" y="9" width="26" height="1.600" fill="#3571b0"/><path d="M12 16l4-3.500" stroke="#223a80" stroke-width="2.400"/><path d="M12 17l8 8" stroke="#aab" stroke-width="1.600" opacity="0.600"/><defs><linearGradient id="g60" x1="0" y1="0" x2="1" y2="1"><stop offset="0" stop-color="#6fd060"/><stop offset="1" stop-color="#169a30"/></linearGradient></defs><g transform="rotate(40 21 8)"><rect x="17.500" y="4" width="7" height="9" rx="1.500" fill="url(#g60)"/><ellipse cx="21" cy="3.500" rx="5.800" ry="3" fill="#3fc050"/><ellipse cx="21" cy="13" rx="4.600" ry="2.200" fill="#1f9a38"/></g></svg>
<svg style="position:absolute;left:2525px;top:203px;" width="26" height="26" viewBox="0 0 26 26"><defs><linearGradient id="g61" x1="0" y1="0" x2="1" y2="1"><stop offset="0" stop-color="#eeeeee"/><stop offset="1" stop-color="#e4e4e4"/></linearGradient></defs><rect x="1.5" y="1.5" width="23" height="18" rx="2" fill="url(#g61)" stroke="#a9a9a9" stroke-width="3"/><rect x="10.0" y="19.5" width="6" height="3" fill="#a0a0a0"/><rect x="4.0" y="22.4" width="18" height="2.6" fill="#a9a9a9"/><rect x="3.500" y="3.500" width="19" height="14" fill="none" stroke="#6f7890" stroke-width="1" opacity="0.700"/><path d="M6.500 8h8M6.500 12h12" stroke="#9a9a9a" stroke-width="2"/></svg>
<svg style="position:absolute;left:2564px;top:213px;" width="14" height="8" viewBox="0 0 14 8"><path d="M0 0h14l-7 8z" fill="#77777c"/></svg>
<svg style="position:absolute;left:2593px;top:198.5px;" width="32" height="32" viewBox="0 0 32 32"><defs><linearGradient id="g62" x1="0" y1="0" x2="0" y2="1"><stop offset="0" stop-color="#8aa0c8"/><stop offset="0.5" stop-color="#9e8c55"/><stop offset="1" stop-color="#8f8150"/></linearGradient><linearGradient id="g63" x1="0" y1="0" x2="0" y2="1"><stop offset="0" stop-color="#f5fbfe"/><stop offset="1" stop-color="#dff0fb"/></linearGradient></defs><rect x="1" y="6" width="28" height="22" fill="url(#g63)" stroke="url(#g62)" stroke-width="2"/><rect x="0" y="5" width="30" height="5.5" fill="#3c9fe0"/><rect x="0" y="5" width="30" height="1.6" fill="#2b6fb5"/><rect x="0" y="9.5" width="30" height="1.3" fill="#2f7fc4"/><path d="M6 27.5C16 28 23 24 24.5 15" fill="none" stroke="#f3dc8c" stroke-width="2.4" opacity="0.9"/><defs><radialGradient id="g64" cx="0.5" cy="0.5" r="0.6"><stop offset="0" stop-color="#f3e2a4"/><stop offset="0.55" stop-color="#c9a440"/><stop offset="1" stop-color="#a07a14"/></radialGradient></defs><path d="M25 1.3000000000000007L32 8.3L25 15.3L18 8.3z" fill="url(#g64)" stroke="#9c7a1c" stroke-width="1"/><path d="M25 4.300000000000001v8M21 8.3h8" stroke="#fff" stroke-width="2.200"/></svg>
<svg style="position:absolute;left:2634px;top:213px;" width="14" height="8" viewBox="0 0 14 8"><path d="M0 0h14l-7 8z" fill="#2a2a2a"/></svg>
<div style="position:absolute;left:1930px;top:236px;width:738px;height:32px;overflow:hidden">
<div style="position:absolute;left:3px;top:6.70px;white-space:pre;font:23.5px/1 'Liberation Sans', sans-serif;color:#000"><span style="letter-spacing:0.72px">&lt;terminated&gt; </span><span style="letter-spacing:0.094px">EnumerationExample [Java Application] </span><span style="letter-spacing:-0.02px">C:\Program Files</span></div></div>
<div style="position:absolute;left:1930px;top:268px;width:738px;height:1px;background:#8c8c8c"></div>
<div style="position:absolute;left:2635px;top:270px;width:33px;height:1383px;background:#f0f0f0"></div>
<div style="position:absolute;left:1930px;top:1653px;width:738px;height:33px;background:#f0f0f0"></div>
<svg style="position:absolute;left:2642.5px;top:279.5px;" width="18" height="18" viewBox="-9 -9 18 18"><path d="M-4.800 2.600L0 -2.400L4.800 2.600" fill="none" stroke="#c1c1c1" stroke-width="2.700"/></svg>
<svg style="position:absolute;left:2642.5px;top:1626.5px;" width="18" height="18" viewBox="-9 -9 18 18"><path d="M-4.800 -2.600L0 2.400L4.800 -2.600" fill="none" stroke="#c1c1c1" stroke-width="2.700"/></svg>
<svg style="position:absolute;left:1937.8px;top:1660.5px;" width="18" height="18" viewBox="-9 -9 18 18"><path d="M2.600 -4.800L-2.400 0L2.600 4.800" fill="none" stroke="#c1c1c1" stroke-width="2.700"/></svg>
<svg style="position:absolute;left:2607.5px;top:1660.5px;" width="18" height="18" viewBox="-9 -9 18 18"><path d="M-2.600 -4.800L2.400 0L-2.600 4.800" fill="none" stroke="#c1c1c1" stroke-width="2.700"/></svg>
<div style="position:absolute;left:1934px;top:275.70px;white-space:pre;font:33.22px/1 'DejaVu Sans Mono', 'Liberation Mono', monospace;letter-spacing:0.02px;color:#000">Today is FRIDAY</div>
<div style="position:absolute;left:1934px;top:363.70px;white-space:pre;font:33.22px/1 'DejaVu Sans Mono', 'Liberation Mono', monospace;letter-spacing:0.02px;color:#000">All WeekDays: </div>
<div style="position:absolute;left:1934px;top:407.70px;white-space:pre;font:33.22px/1 'DejaVu Sans Mono', 'Liberation Mono', monospace;letter-spacing:0.02px;color:#000">MONDAY</div>
<div style="position:absolute;left:1934px;top:451.70px;white-space:pre;font:33.22px/1 'DejaVu Sans Mono', 'Liberation Mono', monospace;letter-spacing:0.02px;color:#000">TUESDAY</div>
<div style="position:absolute;left:1934px;top:495.70px;white-space:pre;font:33.22px/1 'DejaVu Sans Mono', 'Liberation Mono', monospace;letter-spacing:0.02px;color:#000">WEDNESSDAY</div>
<div style="position:absolute;left:1934px;top:539.70px;white-space:pre;font:33.22px/1 'DejaVu Sans Mono', 'Liberation Mono', monospace;letter-spacing:0.02px;color:#000">THURSDAY</div>
<div style="position:absolute;left:1934px;top:583.70px;white-space:pre;font:33.22px/1 'DejaVu Sans Mono', 'Liberation Mono', monospace;letter-spacing:0.02px;color:#000">FRIDAY</div>
<div style="position:absolute;left:1934px;top:627.70px;white-space:pre;font:33.22px/1 'DejaVu Sans Mono', 'Liberation Mono', monospace;letter-spacing:0.02px;color:#000">SATURDAY</div>
<div style="position:absolute;left:1934px;top:671.70px;white-space:pre;font:33.22px/1 'DejaVu Sans Mono', 'Liberation Mono', monospace;letter-spacing:0.02px;color:#000">SUNDAY</div>
<svg style="position:absolute;left:2677px;top:142px;" width="59" height="182" viewBox="0 0 59 182"><path d="M1 1H58V173L50 181H9L1 173z" fill="#e1e6f6" stroke="#b3bad1" stroke-width="1.800"/><path d="M3 3H56V172L49 179H10L3 172z" fill="none" stroke="#fff" stroke-width="1.800"/></svg>
<svg style="position:absolute;left:2692px;top:154.5px;" width="32" height="5" viewBox="0 0 32 5"><rect x="0.0" y="0" width="5" height="5" fill="#fbfbf6"/><rect x="1.0" y="1" width="4" height="4" fill="#a39a84"/><rect x="2.5" y="2.500" width="2.500" height="2.500" fill="#7f755d"/><rect x="8.5" y="0" width="5" height="5" fill="#fbfbf6"/><rect x="9.5" y="1" width="4" height="4" fill="#a39a84"/><rect x="11.0" y="2.500" width="2.500" height="2.500" fill="#7f755d"/><rect x="17.0" y="0" width="5" height="5" fill="#fbfbf6"/><rect x="18.0" y="1" width="4" height="4" fill="#a39a84"/><rect x="19.5" y="2.500" width="2.500" height="2.500" fill="#7f755d"/><rect x="25.5" y="0" width="5" height="5" fill="#fbfbf6"/><rect x="26.5" y="1" width="4" height="4" fill="#a39a84"/><rect x="28.0" y="2.500" width="2.500" height="2.500" fill="#7f755d"/></svg>
<svg style="position:absolute;left:2697px;top:173px;" width="17" height="16" viewBox="0 0 17 16"><rect x="6" y="1" width="9.5" height="7.5" fill="none" stroke="#6b625b" stroke-width="2"/><rect x="5.5" y="0" width="10.5" height="3.4" fill="#6b625b"/><rect x="1" y="7.5" width="9.5" height="7.5" fill="#e1e6f6" stroke="#6b625b" stroke-width="2"/><rect x="0" y="6.5" width="11.5" height="3.4" fill="#6b625b"/></svg>
<svg style="position:absolute;left:2689px;top:203px;" width="30" height="30" viewBox="0 0 30 30"><path d="M1 1h21c3 0 4.500 1.500 4.500 1.500-3 6-3 18 1 25.500H1z" fill="#eef4fc" stroke="#7d86a6" stroke-width="2"/><path d="M18.500 1.500v26M1.500 14.500h23" stroke="#9aa6c4" stroke-width="1.600"/><circle cx="11" cy="8" r="5" fill="#e0202a" stroke="#c01020" stroke-width="1"/><path d="M6.500 26v-5.500l4.500-4.500 4.500 4.500V26z" fill="#ffd84a" stroke="#e08a10" stroke-width="1.800"/></svg>
<div style="position:absolute;left:2695px;top:244px;font:italic bold 23px/1 'Liberation Serif',serif;color:#0d4f96;white-space:pre">@</div>
<svg style="position:absolute;left:2690.5px;top:279px;" width="30" height="32" viewBox="0 0 30 32"><defs><linearGradient id="g65" x1="0" y1="0" x2="0" y2="1"><stop offset="0" stop-color="#c09428"/><stop offset="1" stop-color="#a8905a"/></linearGradient></defs><path d="M1 1h13l7 7v19H1z" fill="#f6f8fe" stroke="url(#g65)" stroke-width="2"/><path d="M14 1.500v7h6.500z" fill="#f1d89a"/><path d="M10 7.500c-2.500 0-2.200 2.500-2.200 4.200s-.5 2.600-2.300 2.600c1.800 0 2.300 1 2.300 2.600s-.3 4.200 2.200 4.200" fill="none" stroke="#2a5a98" stroke-width="2"/><path d="M12 12h5M12 16.500h5" stroke="#2a5a98" stroke-width="2"/><defs><linearGradient id="g66" x1="0" y1="0" x2="0" y2="1"><stop offset="0" stop-color="#fff3c0"/><stop offset="1" stop-color="#f2b53c"/></linearGradient></defs><path d="M12 21.500h8.500v-4.500l8.500 7-8.500 7v-4.500h-8.500z" fill="url(#g66)" stroke="#b8760c" stroke-width="1.800" stroke-linejoin="round"/></svg>
<svg style="position:absolute;left:2677px;top:324px;" width="59" height="106" viewBox="0 0 59 106"><path d="M1 1H58V97L50 105H9L1 97z" fill="#e1e6f6" stroke="#b3bad1" stroke-width="1.800"/><path d="M3 3H56V96L49 103H10L3 96z" fill="none" stroke="#fff" stroke-width="1.800"/></svg>
<svg style="position:absolute;left:2692px;top:336.5px;" width="32" height="5" viewBox="0 0 32 5"><rect x="0.0" y="0" width="5" height="5" fill="#fbfbf6"/><rect x="1.0" y="1" width="4" height="4" fill="#a39a84"/><rect x="2.5" y="2.500" width="2.500" height="2.500" fill="#7f755d"/><rect x="8.5" y="0" width="5" height="5" fill="#fbfbf6"/><rect x="9.5" y="1" width="4" height="4" fill="#a39a84"/><rect x="11.0" y="2.500" width="2.500" height="2.500" fill="#7f755d"/><rect x="17.0" y="0" width="5" height="5" fill="#fbfbf6"/><rect x="18.0" y="1" width="4" height="4" fill="#a39a84"/><rect x="19.5" y="2.500" width="2.500" height="2.500" fill="#7f755d"/><rect x="25.5" y="0" width="5" height="5" fill="#fbfbf6"/><rect x="26.5" y="1" width="4" height="4" fill="#a39a84"/><rect x="28.0" y="2.500" width="2.500" height="2.500" fill="#7f755d"/></svg>
<svg style="position:absolute;left:2697px;top:355px;" width="17" height="16" viewBox="0 0 17 16"><rect x="6" y="1" width="9.5" height="7.5" fill="none" stroke="#6b625b" stroke-width="2"/><rect x="5.5" y="0" width="10.5" height="3.4" fill="#6b625b"/><rect x="1" y="7.5" width="9.5" height="7.5" fill="#e1e6f6" stroke="#6b625b" stroke-width="2"/><rect x="0" y="6.5" width="11.5" height="3.4" fill="#6b625b"/></svg>
<svg style="position:absolute;left:2695px;top:387px;" width="22" height="28" viewBox="0 0 22 28"><defs><linearGradient id="g67" x1="0" y1="0" x2="0" y2="1"><stop offset="0" stop-color="#b8891e"/><stop offset="1" stop-color="#8f7a42"/></linearGradient><linearGradient id="g68" x1="0" y1="0" x2="0" y2="1"><stop offset="0" stop-color="#ffffff"/><stop offset="1" stop-color="#dfe7f6"/></linearGradient></defs><path d="M1 1h13l7 7v19H1z" fill="url(#g68)" stroke="url(#g67)" stroke-width="2"/><path d="M14 1.5v7h6.5z" fill="#f1d89a"/><path d="M12.5 6v11.2c0 3-1.6 4.6-4.2 4.6-1.2 0-2.3-.3-3.2-.9" fill="none" stroke="#2c6aa0" stroke-width="3.600"/></svg>
<div style="position:absolute;left:1292px;top:1692px;width:1.5px;height:44px;background:#9aa0b4"></div>
<div style="position:absolute;left:1528.5px;top:1692px;width:1.5px;height:44px;background:#9aa0b4"></div>
<div style="position:absolute;left:1750px;top:1692px;width:1.5px;height:44px;background:#9aa0b4"></div>
<div style="position:absolute;left:1306.5px;top:1704.80px;white-space:pre;font:normal normal 23px/1 'Liberation Sans', sans-serif;letter-spacing:0.509px;color:#000;">Writable</div>
<div style="position:absolute;left:1542.5px;top:1704.80px;white-space:pre;font:normal normal 23px/1 'Liberation Sans', sans-serif;letter-spacing:0.203px;color:#000;">Smart Insert</div>
<div style="position:absolute;left:1765px;top:1704.80px;white-space:pre;font:normal normal 23px/1 'Liberation Sans', sans-serif;letter-spacing:-0.099px;color:#000;">22 : 1 : 372</div>
<svg style="position:absolute;left:1971px;top:1691px;" width="71" height="45" viewBox="0 0 71 45"><path d="M1.500 43V1.500H68" fill="none" stroke="#eeeeea" stroke-width="1.200"/><path d="M1 43.300H69.200V1" fill="none" stroke="#9b9b9b" stroke-width="2"/></svg>
<svg style="position:absolute;left:1980px;top:1699px;" width="32" height="32" viewBox="0 0 32 32"><defs><linearGradient id="g69" x1="0" y1="0" x2="0" y2="1"><stop offset="0" stop-color="#e8fbff"/><stop offset="0.3" stop-color="#ffffff"/><stop offset="1" stop-color="#ffffff"/></linearGradient></defs><rect x="15.500" y="9.500" width="14" height="15" rx="1.500" fill="url(#g69)" stroke="#6f9fda" stroke-width="3"/><rect x="16" y="10.500" width="13" height="13" fill="none" stroke="#9aa6bc" stroke-width="1.200"/><rect x="19" y="26" width="5" height="3" fill="#6f9bd0"/><rect x="14" y="28.500" width="12" height="2" fill="#6f9bd0"/><defs><linearGradient id="g70" x1="0" y1="1" x2="1" y2="0"><stop offset="0" stop-color="#ffffe8"/><stop offset="0.5" stop-color="#eef0a0"/><stop offset="1" stop-color="#fbfbe0"/></linearGradient></defs><circle cx="9" cy="22" r="7.800" fill="url(#g70)" stroke="#7f9ed2" stroke-width="1.800"/><circle cx="9" cy="22" r="2.200" fill="#fff" stroke="#9ab0dc" stroke-width="1.400"/><defs><linearGradient id="g71" x1="0" y1="0" x2="0" y2="1"><stop offset="0" stop-color="#fff6c8"/><stop offset="0.5" stop-color="#f7c94e"/><stop offset="1" stop-color="#d89a1c"/></linearGradient></defs><path d="M1.500 17.500C0.500 10 4 6 10.500 6V1.800L17.800 9 10.500 16.500V12.500C7.500 12 6 13.500 5.500 18z" fill="url(#g71)" stroke="#b8860b" stroke-width="1.800" stroke-linejoin="round"/></svg>
<svg style="position:absolute;left:2044px;top:1704.3px;" width="4" height="27" viewBox="0 0 4 27"><rect x="0" y="0.0" width="4" height="4" fill="#a39a84"/><rect x="0" y="0.0" width="2" height="2" fill="#d6cfbc"/><rect x="2" y="2.0" width="2" height="2" fill="#7f755d"/><rect x="0" y="7.6" width="4" height="4" fill="#a39a84"/><rect x="0" y="7.6" width="2" height="2" fill="#d6cfbc"/><rect x="2" y="9.6" width="2" height="2" fill="#7f755d"/><rect x="0" y="15.2" width="4" height="4" fill="#a39a84"/><rect x="0" y="15.2" width="2" height="2" fill="#d6cfbc"/><rect x="2" y="17.2" width="2" height="2" fill="#7f755d"/><rect x="0" y="22.8" width="4" height="4" fill="#a39a84"/><rect x="0" y="22.8" width="2" height="2" fill="#d6cfbc"/><rect x="2" y="24.8" width="2" height="2" fill="#7f755d"/></svg>
<svg style="position:absolute;left:2688px;top:1704.3px;" width="4" height="27" viewBox="0 0 4 27"><rect x="0" y="0.0" width="4" height="4" fill="#a39a84"/><rect x="0" y="0.0" width="2" height="2" fill="#d6cfbc"/><rect x="2" y="2.0" width="2" height="2" fill="#7f755d"/><rect x="0" y="7.6" width="4" height="4" fill="#a39a84"/><rect x="0" y="7.6" width="2" height="2" fill="#d6cfbc"/><rect x="2" y="9.6" width="2" height="2" fill="#7f755d"/><rect x="0" y="15.2" width="4" height="4" fill="#a39a84"/><rect x="0" y="15.2" width="2" height="2" fill="#d6cfbc"/><rect x="2" y="17.2" width="2" height="2" fill="#7f755d"/><rect x="0" y="22.8" width="4" height="4" fill="#a39a84"/><rect x="0" y="22.8" width="2" height="2" fill="#d6cfbc"/><rect x="2" y="24.8" width="2" height="2" fill="#7f755d"/></svg>
<svg style="position:absolute;left:2706px;top:1703px;" width="21" height="31" viewBox="0 0 21 31"><defs><radialGradient id="g72" cx="0.4" cy="0.35" r="0.7"><stop offset="0" stop-color="#fffbe0"/><stop offset="0.6" stop-color="#ffe680"/><stop offset="1" stop-color="#f5b820"/></radialGradient></defs><path d="M10.500 1.200c-5.500 0-9 4-9 8.800 0 5 4 7 4.500 11h9c.5-4 4.500-6 4.500-11 0-4.800-3.500-8.800-9-8.800z" fill="url(#g72)" stroke="#e0a21a" stroke-width="2"/><rect x="6.500" y="22" width="8" height="5" fill="#8a8f9a" stroke="#5a5f6a" stroke-width="1"/><rect x="8" y="27.500" width="5" height="2.500" fill="#3a3f4a"/></svg>
</body></html>
